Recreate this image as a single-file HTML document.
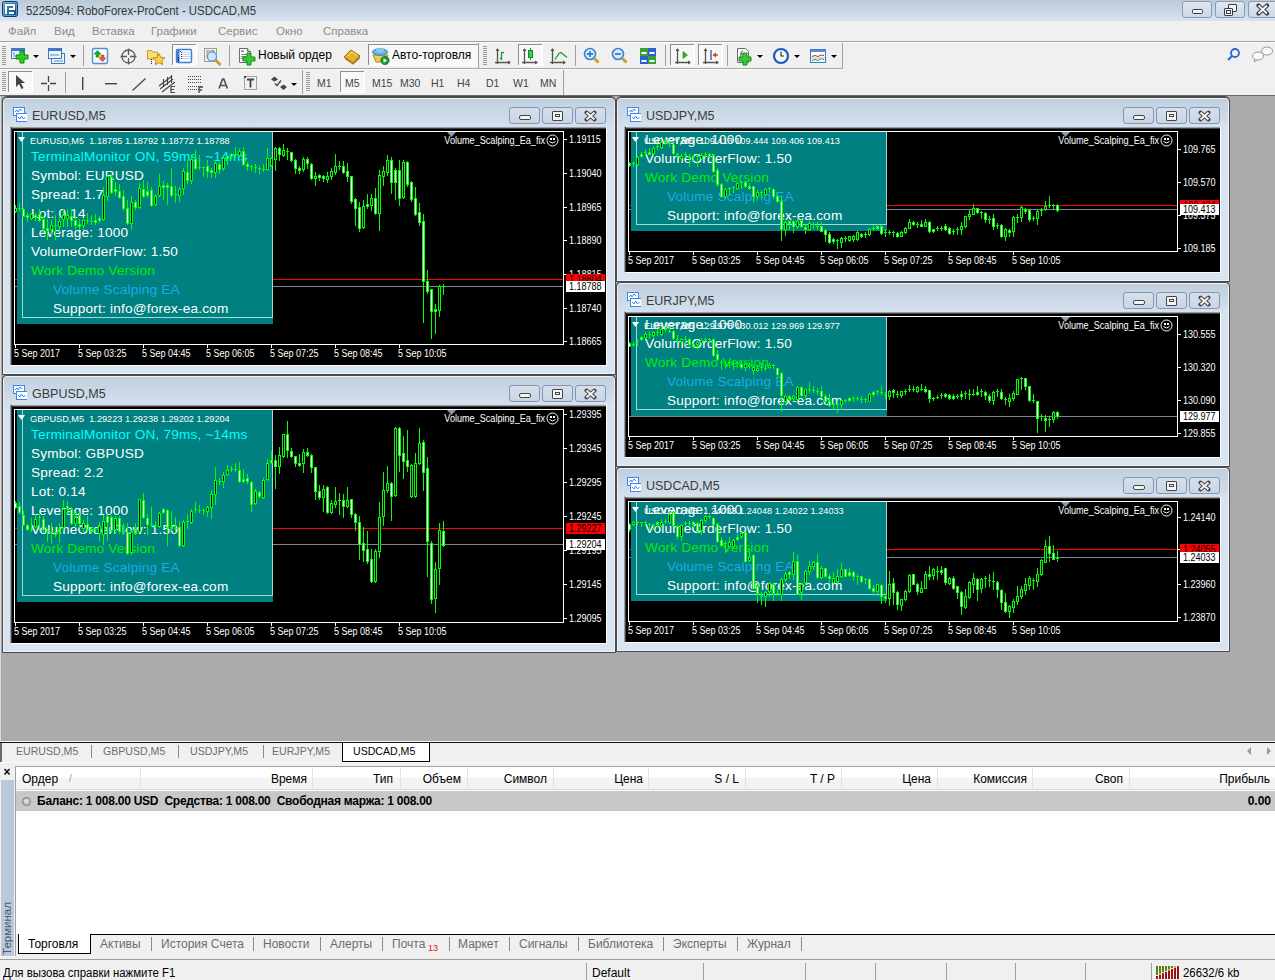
<!DOCTYPE html><html><head><meta charset="utf-8"><style>
*{margin:0;padding:0;box-sizing:border-box}
html,body{width:1275px;height:980px;overflow:hidden;background:#f0f0f0;font-family:"Liberation Sans",sans-serif;position:relative}
.a{position:absolute}
.t{position:absolute;white-space:nowrap;line-height:1}
</style></head><body><div class="a" style="left:0;top:0;width:1275px;height:21px;background:linear-gradient(#bccad8,#c8d6e4 50%,#d7e4f3)"></div><svg class="a" style="left:0;top:0" width="20" height="20"><defs><linearGradient id="lg" x1="0" y1="0" x2="1" y2="1"><stop offset="0" stop-color="#5aa6d8"/><stop offset="1" stop-color="#0a3f7a"/></linearGradient></defs><rect x="2.5" y="1.5" width="15" height="15" rx="2" fill="url(#lg)" stroke="#0b3c72"/><rect x="3.5" y="2.5" width="13" height="13" rx="1" fill="none" stroke="#8cc6ea" stroke-opacity=".6"/><rect x="5" y="4" width="2" height="10" fill="#fff"/><rect x="5" y="4" width="10" height="2" fill="#fff"/><rect x="13" y="4" width="2" height="6" fill="#fff"/><rect x="9" y="8" width="6" height="2" fill="#fff"/><rect x="9" y="12" width="5" height="2" fill="#fff"/></svg><div class="t" style="left:26px;top:5px;font-size:12px;color:#353535;transform:scaleX(0.95);transform-origin:0 0">5225094: RoboForex-ProCent - USDCAD,M5</div><div class="a" style="left:1182px;top:1px;width:30px;height:17px;border:1px solid #8a9ab5;border-radius:3px;background:linear-gradient(#dfe7f1,#cbd8e7)"></div><div class="a" style="left:1215px;top:1px;width:30px;height:17px;border:1px solid #8a9ab5;border-radius:3px;background:linear-gradient(#dfe7f1,#cbd8e7)"></div><div class="a" style="left:1248px;top:1px;width:30px;height:17px;border:1px solid #8a9ab5;border-radius:3px;background:linear-gradient(#dfe7f1,#cbd8e7)"></div><div class="a" style="left:1192px;top:9px;width:11px;height:5px;background:#f4f4f4;border:1px solid #3a3a48;border-radius:1.5px"></div><div class="a" style="left:1228px;top:4px;width:9px;height:8px;background:#f4f4f4;border:1px solid #3a3a48;border-radius:1px"></div><div class="a" style="left:1224px;top:8px;width:9px;height:8px;background:#f4f4f4;border:1px solid #3a3a48;border-radius:1px"></div><div class="a" style="left:1226px;top:10px;width:5px;height:4px;border:1px solid #3a3a48"></div><svg class="a" style="left:1256px;top:3px" width="14" height="13"><path d="M2.5 2.5L11 10.5M11 2.5L2.5 10.5" stroke="#3a3a48" stroke-width="4.2" stroke-linecap="round"/><path d="M2.5 2.5L11 10.5M11 2.5L2.5 10.5" stroke="#f4f4f4" stroke-width="2"/></svg><div class="t" style="left:8px;top:25.5px;font-size:11.5px;color:#8c8c8c">Файл</div><div class="t" style="left:54px;top:25.5px;font-size:11.5px;color:#8c8c8c">Вид</div><div class="t" style="left:92px;top:25.5px;font-size:11.5px;color:#8c8c8c">Вставка</div><div class="t" style="left:151px;top:25.5px;font-size:11.5px;color:#8c8c8c">Графики</div><div class="t" style="left:218px;top:25.5px;font-size:11.5px;color:#8c8c8c">Сервис</div><div class="t" style="left:276px;top:25.5px;font-size:11.5px;color:#8c8c8c">Окно</div><div class="t" style="left:323px;top:25.5px;font-size:11.5px;color:#8c8c8c">Справка</div><div class="a" style="left:0;top:41px;width:1275px;height:1px;background:#a0a0a0"></div><div class="a" style="left:0;top:42px;width:1275px;height:1px;background:#fdfdfd"></div><div class="a" style="left:0;top:68px;width:843px;height:1px;background:#a8a8a8"></div><div class="a" style="left:0;top:69px;width:843px;height:1px;background:#fbfbfb"></div><div class="a" style="left:0;top:95px;width:1275px;height:1px;background:#6a6a6a"></div><div class="a" style="left:0;top:96px;width:1275px;height:645px;background:#ababab"></div><div class="a" style="left:0;top:741px;width:1275px;height:1px;background:#f8f8f8"></div><div class="a" style="left:0;top:96px;width:1px;height:645px;background:#d9d9d9"></div><div class="a" style="left:1px;top:96px;width:1px;height:645px;background:#a8a8a8"></div><div class="a" style="left:2px;top:96px;width:614px;height:279px;border:1px solid #4a4a4a;border-radius:5px 5px 0 0;box-shadow:inset 0 1px #4a4a4a,inset 0 2px #eef3f9,inset 1px 0 #eef3f9,inset -1px -1px #eef3f9;background:linear-gradient(#c0cedc 0px,#c6d4e3 10px,#cfdbe9 22px,#d6e2ef 31px,#d8e4f0 100%)"></div><svg class="a" style="left:11px;top:107px" width="16" height="16" shape-rendering="crispEdges"><rect x="2.5" y="0.5" width="11" height="8" fill="#fff" stroke="#3d86f0"/><rect x="5.5" y="6.5" width="11" height="8" fill="#fff" stroke="#3d86f0"/><path d="M4 5l2-2 1 2 2-3 2 2" fill="none" stroke="#3d86f0" shape-rendering="auto"/><path d="M7 10l2 2 1.5-3 2 3 2-2" fill="none" stroke="#3d86f0" shape-rendering="auto"/></svg><div class="t" style="left:32px;top:110px;font-size:12.5px;color:#3b3b3b">EURUSD,M5</div><div class="a" style="left:509px;top:107px;width:31px;height:17px;border:1px solid #8595b3;border-radius:3px;background:linear-gradient(#d6e0ec,#c8d5e5)"></div><div class="a" style="left:542px;top:107px;width:31px;height:17px;border:1px solid #8595b3;border-radius:3px;background:linear-gradient(#d6e0ec,#c8d5e5)"></div><div class="a" style="left:575px;top:107px;width:31px;height:17px;border:1px solid #8595b3;border-radius:3px;background:linear-gradient(#d6e0ec,#c8d5e5)"></div><div class="a" style="left:519px;top:115px;width:12px;height:5px;background:#f4f4f4;border:1px solid #444;border-radius:2px"></div><div class="a" style="left:552px;top:111px;width:11px;height:10px;background:#f4f4f4;border:1px solid #444;border-radius:1px"></div><div class="a" style="left:555px;top:114px;width:5px;height:3px;border:1px solid #444"></div><svg class="a" style="left:584px;top:110px" width="13" height="12"><path d="M2.5 2.5L10.5 9.5M10.5 2.5L2.5 9.5" stroke="#444" stroke-width="4" stroke-linecap="round"/><path d="M2.5 2.5L10.5 9.5M10.5 2.5L2.5 9.5" stroke="#f4f4f4" stroke-width="2"/></svg><div class="a" style="left:10px;top:126px;width:597px;height:240px;border-top:1px solid #d3dfec;border-left:1px solid #9c9c9c;border-right:1px solid #fff;border-bottom:1px solid #fff;background:#000;background-clip:padding-box;overflow:hidden"><svg class="a" style="left:0;top:0" width="595" height="238" shape-rendering="crispEdges"><rect x="3" y="152" width="549" height="1" fill="#ff0000"/><rect x="3" y="159" width="549" height="1" fill="#778899"/><rect x="6" y="5" width="256" height="192" fill="#008080"/><rect x="11.5" y="4.5" width="250" height="186" fill="none" stroke="#a6d6d6" stroke-width="1"/></svg><svg class="a" style="left:7px;top:10px" width="8" height="6"><path d="M0 0h7l-3.5 5z" fill="#fff"/></svg><div class="t" style="left:19px;top:9.3px;font-size:9.4px;color:#fff;transform:scaleX(0.98);transform-origin:0 0">EURUSD,M5&nbsp; 1.18785 1.18792 1.18772 1.18788</div><div class="t" style="left:20px;top:23px;font-size:13.6px;letter-spacing:0.2px;color:#00ffff">TerminalMonitor ON, 59ms, ~14ms</div><div class="t" style="left:20px;top:42px;font-size:13.6px;letter-spacing:0.2px;color:#fff">Symbol: EURUSD</div><div class="t" style="left:20px;top:61px;font-size:13.6px;letter-spacing:0.2px;color:#fff">Spread: 1.7</div><div class="t" style="left:20px;top:80px;font-size:13.6px;letter-spacing:0.2px;color:#fff">Lot: 0.14</div><div class="t" style="left:20px;top:99px;font-size:13.6px;letter-spacing:0.2px;color:#fff">Leverage: 1000</div><div class="t" style="left:20px;top:118px;font-size:13.6px;letter-spacing:0.2px;color:#fff">VolumeOrderFlow: 1.50</div><div class="t" style="left:20px;top:137px;font-size:13.6px;letter-spacing:0.2px;color:#00f000">Work Demo Version</div><div class="t" style="left:42px;top:156px;font-size:13.6px;letter-spacing:0.2px;color:#1eaae6">Volume Scalping EA</div><div class="t" style="left:42px;top:175px;font-size:13.6px;letter-spacing:0.2px;color:#fff">Support: info@forex-ea.com</div><svg class="a" style="left:0;top:0" width="595" height="238" shape-rendering="crispEdges"><rect x="4" y="78" width="1" height="8" fill="#00ff00"/><rect x="3.5" y="81.5" width="2" height="3" fill="#000" stroke="#00ff00"/><rect x="8" y="76" width="1" height="8" fill="#00ff00"/><rect x="7" y="81" width="3" height="1" fill="#00ff00"/><rect x="12" y="81" width="1" height="9" fill="#00ff00"/><rect x="11.5" y="82.5" width="2" height="7" fill="#fff" stroke="#00ff00"/><rect x="16" y="86" width="1" height="9" fill="#00ff00"/><rect x="15.5" y="88.5" width="2" height="2" fill="#fff" stroke="#00ff00"/><rect x="20" y="86" width="1" height="7" fill="#00ff00"/><rect x="19.5" y="87.5" width="2" height="4" fill="#000" stroke="#00ff00"/><rect x="24" y="86" width="1" height="8" fill="#00ff00"/><rect x="23.5" y="88.5" width="2" height="2" fill="#fff" stroke="#00ff00"/><rect x="28" y="82" width="1" height="13" fill="#00ff00"/><rect x="27.5" y="87.5" width="2" height="6" fill="#fff" stroke="#00ff00"/><rect x="32" y="89" width="1" height="17" fill="#00ff00"/><rect x="31.5" y="92.5" width="2" height="9" fill="#fff" stroke="#00ff00"/><rect x="36" y="92" width="1" height="21" fill="#00ff00"/><rect x="35.5" y="101.5" width="2" height="2" fill="#fff" stroke="#00ff00"/><rect x="40" y="93" width="1" height="15" fill="#00ff00"/><rect x="39.5" y="98.5" width="2" height="4" fill="#000" stroke="#00ff00"/><rect x="44" y="88" width="1" height="25" fill="#00ff00"/><rect x="43" y="98" width="3" height="1" fill="#00ff00"/><rect x="48" y="90" width="1" height="15" fill="#00ff00"/><rect x="47.5" y="94.5" width="2" height="5" fill="#000" stroke="#00ff00"/><rect x="52" y="82" width="1" height="18" fill="#00ff00"/><rect x="51.5" y="88.5" width="2" height="4" fill="#000" stroke="#00ff00"/><rect x="56" y="82" width="1" height="18" fill="#00ff00"/><rect x="55.5" y="88.5" width="2" height="3" fill="#000" stroke="#00ff00"/><rect x="60" y="82" width="1" height="18" fill="#00ff00"/><rect x="59.5" y="89.5" width="2" height="4" fill="#fff" stroke="#00ff00"/><rect x="64" y="90" width="1" height="12" fill="#00ff00"/><rect x="63.5" y="93.5" width="2" height="5" fill="#fff" stroke="#00ff00"/><rect x="68" y="92" width="1" height="11" fill="#00ff00"/><rect x="67.5" y="97.5" width="2" height="2" fill="#fff" stroke="#00ff00"/><rect x="72" y="92" width="1" height="11" fill="#00ff00"/><rect x="71.5" y="93.5" width="2" height="5" fill="#000" stroke="#00ff00"/><rect x="76" y="86" width="1" height="11" fill="#00ff00"/><rect x="75" y="93" width="3" height="1" fill="#00ff00"/><rect x="80" y="88" width="1" height="10" fill="#00ff00"/><rect x="79" y="94" width="3" height="1" fill="#00ff00"/><rect x="84" y="87" width="1" height="11" fill="#00ff00"/><rect x="83.5" y="93.5" width="2" height="2" fill="#fff" stroke="#00ff00"/><rect x="88" y="89" width="1" height="7" fill="#00ff00"/><rect x="87.5" y="91.5" width="2" height="2" fill="#fff" stroke="#00ff00"/><rect x="92" y="60" width="1" height="34" fill="#00ff00"/><rect x="91.5" y="68.5" width="2" height="24" fill="#000" stroke="#00ff00"/><rect x="96" y="47" width="1" height="27" fill="#00ff00"/><rect x="95.5" y="49.5" width="2" height="20" fill="#000" stroke="#00ff00"/><rect x="100" y="47" width="1" height="20" fill="#00ff00"/><rect x="99.5" y="50.5" width="2" height="15" fill="#fff" stroke="#00ff00"/><rect x="104" y="55" width="1" height="14" fill="#00ff00"/><rect x="103.5" y="62.5" width="2" height="2" fill="#fff" stroke="#00ff00"/><rect x="108" y="57" width="1" height="15" fill="#00ff00"/><rect x="107.5" y="64.5" width="2" height="6" fill="#fff" stroke="#00ff00"/><rect x="112" y="63" width="1" height="21" fill="#00ff00"/><rect x="111.5" y="69.5" width="2" height="12" fill="#fff" stroke="#00ff00"/><rect x="116" y="73" width="1" height="25" fill="#00ff00"/><rect x="115.5" y="81.5" width="2" height="15" fill="#fff" stroke="#00ff00"/><rect x="120" y="69" width="1" height="34" fill="#00ff00"/><rect x="119.5" y="75.5" width="2" height="21" fill="#000" stroke="#00ff00"/><rect x="124" y="73" width="1" height="10" fill="#00ff00"/><rect x="123.5" y="75.5" width="2" height="5" fill="#fff" stroke="#00ff00"/><rect x="128" y="56" width="1" height="26" fill="#00ff00"/><rect x="127.5" y="61.5" width="2" height="19" fill="#000" stroke="#00ff00"/><rect x="132" y="53" width="1" height="18" fill="#00ff00"/><rect x="131.5" y="62.5" width="2" height="7" fill="#fff" stroke="#00ff00"/><rect x="136" y="55" width="1" height="16" fill="#00ff00"/><rect x="135.5" y="64.5" width="2" height="4" fill="#fff" stroke="#00ff00"/><rect x="140" y="60" width="1" height="20" fill="#00ff00"/><rect x="139.5" y="63.5" width="2" height="15" fill="#fff" stroke="#00ff00"/><rect x="144" y="67" width="1" height="12" fill="#00ff00"/><rect x="143.5" y="69.5" width="2" height="8" fill="#000" stroke="#00ff00"/><rect x="148" y="47" width="1" height="23" fill="#00ff00"/><rect x="147.5" y="59.5" width="2" height="9" fill="#000" stroke="#00ff00"/><rect x="152" y="54" width="1" height="19" fill="#00ff00"/><rect x="151.5" y="58.5" width="2" height="2" fill="#fff" stroke="#00ff00"/><rect x="156" y="56" width="1" height="22" fill="#00ff00"/><rect x="155.5" y="58.5" width="2" height="2" fill="#fff" stroke="#00ff00"/><rect x="160" y="41" width="1" height="29" fill="#00ff00"/><rect x="159.5" y="59.5" width="2" height="9" fill="#fff" stroke="#00ff00"/><rect x="164" y="59" width="1" height="17" fill="#00ff00"/><rect x="163" y="67" width="3" height="1" fill="#00ff00"/><rect x="168" y="60" width="1" height="15" fill="#00ff00"/><rect x="167.5" y="62.5" width="2" height="6" fill="#000" stroke="#00ff00"/><rect x="172" y="41" width="1" height="27" fill="#00ff00"/><rect x="171.5" y="44.5" width="2" height="17" fill="#000" stroke="#00ff00"/><rect x="176" y="34" width="1" height="23" fill="#00ff00"/><rect x="175.5" y="45.5" width="2" height="8" fill="#fff" stroke="#00ff00"/><rect x="180" y="30" width="1" height="27" fill="#00ff00"/><rect x="179.5" y="32.5" width="2" height="21" fill="#000" stroke="#00ff00"/><rect x="184" y="23" width="1" height="20" fill="#00ff00"/><rect x="183.5" y="32.5" width="2" height="9" fill="#fff" stroke="#00ff00"/><rect x="188" y="28" width="1" height="15" fill="#00ff00"/><rect x="187" y="40" width="3" height="1" fill="#00ff00"/><rect x="192" y="39" width="1" height="11" fill="#00ff00"/><rect x="191" y="40" width="3" height="1" fill="#00ff00"/><rect x="196" y="33" width="1" height="18" fill="#00ff00"/><rect x="195.5" y="39.5" width="2" height="5" fill="#fff" stroke="#00ff00"/><rect x="200" y="41" width="1" height="10" fill="#00ff00"/><rect x="199.5" y="43.5" width="2" height="2" fill="#fff" stroke="#00ff00"/><rect x="204" y="33" width="1" height="18" fill="#00ff00"/><rect x="203.5" y="36.5" width="2" height="9" fill="#000" stroke="#00ff00"/><rect x="208" y="35" width="1" height="12" fill="#00ff00"/><rect x="207.5" y="37.5" width="2" height="5" fill="#fff" stroke="#00ff00"/><rect x="212" y="29" width="1" height="15" fill="#00ff00"/><rect x="211.5" y="31.5" width="2" height="10" fill="#000" stroke="#00ff00"/><rect x="216" y="28" width="1" height="10" fill="#00ff00"/><rect x="215.5" y="29.5" width="2" height="2" fill="#fff" stroke="#00ff00"/><rect x="220" y="26" width="1" height="6" fill="#00ff00"/><rect x="219.5" y="27.5" width="2" height="2" fill="#fff" stroke="#00ff00"/><rect x="224" y="20" width="1" height="11" fill="#00ff00"/><rect x="223" y="27" width="3" height="1" fill="#00ff00"/><rect x="228" y="21" width="1" height="9" fill="#00ff00"/><rect x="227.5" y="24.5" width="2" height="4" fill="#000" stroke="#00ff00"/><rect x="232" y="20" width="1" height="19" fill="#00ff00"/><rect x="231.5" y="24.5" width="2" height="13" fill="#fff" stroke="#00ff00"/><rect x="236" y="35" width="1" height="9" fill="#00ff00"/><rect x="235.5" y="37.5" width="2" height="2" fill="#fff" stroke="#00ff00"/><rect x="240" y="38" width="1" height="6" fill="#00ff00"/><rect x="239" y="39" width="3" height="1" fill="#00ff00"/><rect x="244" y="37" width="1" height="9" fill="#00ff00"/><rect x="243" y="40" width="3" height="1" fill="#00ff00"/><rect x="248" y="39" width="1" height="8" fill="#00ff00"/><rect x="247" y="41" width="3" height="1" fill="#00ff00"/><rect x="252" y="37" width="1" height="8" fill="#00ff00"/><rect x="251" y="42" width="3" height="1" fill="#00ff00"/><rect x="256" y="21" width="1" height="23" fill="#00ff00"/><rect x="255.5" y="31.5" width="2" height="11" fill="#000" stroke="#00ff00"/><rect x="260" y="30" width="1" height="10" fill="#00ff00"/><rect x="259.5" y="31.5" width="2" height="7" fill="#000" stroke="#00ff00"/><rect x="264" y="20" width="1" height="24" fill="#00ff00"/><rect x="263.5" y="21.5" width="2" height="11" fill="#000" stroke="#00ff00"/><rect x="268" y="20" width="1" height="14" fill="#00ff00"/><rect x="267.5" y="21.5" width="2" height="6" fill="#fff" stroke="#00ff00"/><rect x="272" y="17" width="1" height="13" fill="#00ff00"/><rect x="271.5" y="23.5" width="2" height="5" fill="#000" stroke="#00ff00"/><rect x="276" y="21" width="1" height="12" fill="#00ff00"/><rect x="275" y="24" width="3" height="1" fill="#00ff00"/><rect x="280" y="25" width="1" height="10" fill="#00ff00"/><rect x="279.5" y="25.5" width="2" height="8" fill="#fff" stroke="#00ff00"/><rect x="284" y="32" width="1" height="15" fill="#00ff00"/><rect x="283.5" y="33.5" width="2" height="8" fill="#fff" stroke="#00ff00"/><rect x="288" y="39" width="1" height="8" fill="#00ff00"/><rect x="287.5" y="41.5" width="2" height="2" fill="#fff" stroke="#00ff00"/><rect x="292" y="30" width="1" height="15" fill="#00ff00"/><rect x="291.5" y="32.5" width="2" height="10" fill="#000" stroke="#00ff00"/><rect x="296" y="30" width="1" height="12" fill="#00ff00"/><rect x="295.5" y="32.5" width="2" height="4" fill="#fff" stroke="#00ff00"/><rect x="300" y="36" width="1" height="17" fill="#00ff00"/><rect x="299.5" y="37.5" width="2" height="14" fill="#fff" stroke="#00ff00"/><rect x="304" y="45" width="1" height="14" fill="#00ff00"/><rect x="303.5" y="49.5" width="2" height="2" fill="#000" stroke="#00ff00"/><rect x="308" y="47" width="1" height="7" fill="#00ff00"/><rect x="307.5" y="48.5" width="2" height="2" fill="#fff" stroke="#00ff00"/><rect x="312" y="48" width="1" height="7" fill="#00ff00"/><rect x="311.5" y="49.5" width="2" height="2" fill="#fff" stroke="#00ff00"/><rect x="316" y="45" width="1" height="11" fill="#00ff00"/><rect x="315.5" y="49.5" width="2" height="3" fill="#000" stroke="#00ff00"/><rect x="320" y="41" width="1" height="12" fill="#00ff00"/><rect x="319.5" y="44.5" width="2" height="5" fill="#000" stroke="#00ff00"/><rect x="324" y="27" width="1" height="21" fill="#00ff00"/><rect x="323.5" y="39.5" width="2" height="6" fill="#000" stroke="#00ff00"/><rect x="328" y="34" width="1" height="9" fill="#00ff00"/><rect x="327" y="39" width="3" height="1" fill="#00ff00"/><rect x="332" y="34" width="1" height="13" fill="#00ff00"/><rect x="331.5" y="39.5" width="2" height="6" fill="#fff" stroke="#00ff00"/><rect x="336" y="36" width="1" height="19" fill="#00ff00"/><rect x="335.5" y="44.5" width="2" height="5" fill="#fff" stroke="#00ff00"/><rect x="340" y="49" width="1" height="28" fill="#00ff00"/><rect x="339.5" y="49.5" width="2" height="25" fill="#fff" stroke="#00ff00"/><rect x="344" y="71" width="1" height="28" fill="#00ff00"/><rect x="343.5" y="72.5" width="2" height="9" fill="#fff" stroke="#00ff00"/><rect x="348" y="75" width="1" height="30" fill="#00ff00"/><rect x="347.5" y="80.5" width="2" height="21" fill="#fff" stroke="#00ff00"/><rect x="352" y="73" width="1" height="29" fill="#00ff00"/><rect x="351.5" y="79.5" width="2" height="21" fill="#000" stroke="#00ff00"/><rect x="356" y="67" width="1" height="15" fill="#00ff00"/><rect x="355.5" y="77.5" width="2" height="2" fill="#fff" stroke="#00ff00"/><rect x="360" y="67" width="1" height="17" fill="#00ff00"/><rect x="359.5" y="71.5" width="2" height="7" fill="#000" stroke="#00ff00"/><rect x="364" y="61" width="1" height="27" fill="#00ff00"/><rect x="363.5" y="71.5" width="2" height="15" fill="#fff" stroke="#00ff00"/><rect x="368" y="43" width="1" height="61" fill="#00ff00"/><rect x="367.5" y="48.5" width="2" height="38" fill="#000" stroke="#00ff00"/><rect x="372" y="39" width="1" height="20" fill="#00ff00"/><rect x="371.5" y="44.5" width="2" height="5" fill="#000" stroke="#00ff00"/><rect x="376" y="28" width="1" height="21" fill="#00ff00"/><rect x="375.5" y="33.5" width="2" height="12" fill="#000" stroke="#00ff00"/><rect x="380" y="30" width="1" height="37" fill="#00ff00"/><rect x="379.5" y="33.5" width="2" height="22" fill="#fff" stroke="#00ff00"/><rect x="384" y="41" width="1" height="32" fill="#00ff00"/><rect x="383.5" y="43.5" width="2" height="12" fill="#fff" stroke="#00ff00"/><rect x="388" y="33" width="1" height="46" fill="#00ff00"/><rect x="387.5" y="43.5" width="2" height="28" fill="#fff" stroke="#00ff00"/><rect x="392" y="33" width="1" height="39" fill="#00ff00"/><rect x="391.5" y="35.5" width="2" height="35" fill="#000" stroke="#00ff00"/><rect x="396" y="34" width="1" height="26" fill="#00ff00"/><rect x="395.5" y="35.5" width="2" height="22" fill="#fff" stroke="#00ff00"/><rect x="400" y="54" width="1" height="21" fill="#00ff00"/><rect x="399.5" y="55.5" width="2" height="17" fill="#fff" stroke="#00ff00"/><rect x="404" y="60" width="1" height="29" fill="#00ff00"/><rect x="403.5" y="71.5" width="2" height="16" fill="#fff" stroke="#00ff00"/><rect x="408" y="76" width="1" height="23" fill="#00ff00"/><rect x="407.5" y="85.5" width="2" height="10" fill="#fff" stroke="#00ff00"/><rect x="412" y="87" width="1" height="109" fill="#00ff00"/><rect x="411.5" y="94.5" width="2" height="60" fill="#fff" stroke="#00ff00"/><rect x="416" y="143" width="1" height="24" fill="#00ff00"/><rect x="415.5" y="154.5" width="2" height="10" fill="#fff" stroke="#00ff00"/><rect x="420" y="162" width="1" height="50" fill="#00ff00"/><rect x="419.5" y="162.5" width="2" height="22" fill="#fff" stroke="#00ff00"/><rect x="424" y="177" width="1" height="30" fill="#00ff00"/><rect x="423.5" y="182.5" width="2" height="2" fill="#fff" stroke="#00ff00"/><rect x="428" y="158" width="1" height="32" fill="#00ff00"/><rect x="427.5" y="159.5" width="2" height="24" fill="#000" stroke="#00ff00"/><rect x="432" y="157" width="1" height="11" fill="#00ff00"/><rect x="431" y="159" width="3" height="1" fill="#00ff00"/><rect x="3.5" y="4.5" width="549" height="213" fill="none" stroke="#fff"/><path d="M436.0 5h9l-4.5 5z" fill="#8c9aab" shape-rendering="auto"/><rect x="553" y="12" width="3" height="1" fill="#fff"/><rect x="553" y="46" width="3" height="1" fill="#fff"/><rect x="553" y="80" width="3" height="1" fill="#fff"/><rect x="553" y="113" width="3" height="1" fill="#fff"/><rect x="553" y="147" width="3" height="1" fill="#fff"/><rect x="553" y="181" width="3" height="1" fill="#fff"/><rect x="553" y="214" width="3" height="1" fill="#fff"/><rect x="4" y="218" width="1" height="3" fill="#fff"/><rect x="68" y="218" width="1" height="3" fill="#fff"/><rect x="132" y="218" width="1" height="3" fill="#fff"/><rect x="196" y="218" width="1" height="3" fill="#fff"/><rect x="260" y="218" width="1" height="3" fill="#fff"/><rect x="324" y="218" width="1" height="3" fill="#fff"/><rect x="388" y="218" width="1" height="3" fill="#fff"/></svg><div class="t" style="left:558px;top:7.5px;font-size:10px;color:#fff;transform:scaleX(0.9);transform-origin:0 0">1.19115</div><div class="t" style="left:558px;top:41.5px;font-size:10px;color:#fff;transform:scaleX(0.9);transform-origin:0 0">1.19040</div><div class="t" style="left:558px;top:75.5px;font-size:10px;color:#fff;transform:scaleX(0.9);transform-origin:0 0">1.18965</div><div class="t" style="left:558px;top:108.5px;font-size:10px;color:#fff;transform:scaleX(0.9);transform-origin:0 0">1.18890</div><div class="t" style="left:558px;top:142.5px;font-size:10px;color:#fff;transform:scaleX(0.9);transform-origin:0 0">1.18815</div><div class="t" style="left:558px;top:176.5px;font-size:10px;color:#fff;transform:scaleX(0.9);transform-origin:0 0">1.18740</div><div class="t" style="left:558px;top:209.5px;font-size:10px;color:#fff;transform:scaleX(0.9);transform-origin:0 0">1.18665</div><div class="a" style="left:555px;top:147px;width:39px;height:11px;background:#ff0000"></div><div class="t" style="left:558px;top:147.5px;font-size:10px;color:#000;transform:scaleX(0.9);transform-origin:0 0">1.18804</div><div class="a" style="left:555px;top:154px;width:39px;height:11px;background:#fff"></div><div class="t" style="left:558px;top:154.5px;font-size:10px;color:#000;transform:scaleX(0.9);transform-origin:0 0">1.18788</div><div class="t" style="left:3px;top:221.5px;font-size:10px;color:#fff;transform:scaleX(0.9);transform-origin:0 0">5 Sep 2017</div><div class="t" style="left:67px;top:221.5px;font-size:10px;color:#fff;transform:scaleX(0.9);transform-origin:0 0">5 Sep 03:25</div><div class="t" style="left:131px;top:221.5px;font-size:10px;color:#fff;transform:scaleX(0.9);transform-origin:0 0">5 Sep 04:45</div><div class="t" style="left:195px;top:221.5px;font-size:10px;color:#fff;transform:scaleX(0.9);transform-origin:0 0">5 Sep 06:05</div><div class="t" style="left:259px;top:221.5px;font-size:10px;color:#fff;transform:scaleX(0.9);transform-origin:0 0">5 Sep 07:25</div><div class="t" style="left:323px;top:221.5px;font-size:10px;color:#fff;transform:scaleX(0.9);transform-origin:0 0">5 Sep 08:45</div><div class="t" style="left:387px;top:221.5px;font-size:10px;color:#fff;transform:scaleX(0.9);transform-origin:0 0">5 Sep 10:05</div><div class="t" style="left:534px;top:9px;font-size:10px;color:#fff;transform:translateX(-100%) scaleX(0.91);transform-origin:100% 0">Volume_Scalping_Ea_fix</div><svg class="a" style="left:535px;top:7px" width="13" height="13"><circle cx="6.5" cy="6.5" r="5.5" fill="none" stroke="#fff"/><rect x="4" y="4" width="2" height="2" fill="#fff"/><rect x="7" y="4" width="2" height="2" fill="#fff"/><path d="M3.5 7.5q3 3 6 0" fill="none" stroke="#fff"/></svg></div><div class="a" style="left:10px;top:127px;width:596px;height:1px;background:#9c9c9c"></div><div class="a" style="left:11px;top:128px;width:595px;height:1px;background:#404040"></div><div class="a" style="left:11px;top:127px;width:1px;height:238px;background:#404040"></div><div class="a" style="left:2px;top:374px;width:614px;height:279px;border:1px solid #4a4a4a;border-radius:5px 5px 0 0;box-shadow:inset 0 1px #4a4a4a,inset 0 2px #eef3f9,inset 1px 0 #eef3f9,inset -1px -1px #eef3f9;background:linear-gradient(#c0cedc 0px,#c6d4e3 10px,#cfdbe9 22px,#d6e2ef 31px,#d8e4f0 100%)"></div><svg class="a" style="left:11px;top:385px" width="16" height="16" shape-rendering="crispEdges"><rect x="2.5" y="0.5" width="11" height="8" fill="#fff" stroke="#3d86f0"/><rect x="5.5" y="6.5" width="11" height="8" fill="#fff" stroke="#3d86f0"/><path d="M4 5l2-2 1 2 2-3 2 2" fill="none" stroke="#3d86f0" shape-rendering="auto"/><path d="M7 10l2 2 1.5-3 2 3 2-2" fill="none" stroke="#3d86f0" shape-rendering="auto"/></svg><div class="t" style="left:32px;top:388px;font-size:12.5px;color:#3b3b3b">GBPUSD,M5</div><div class="a" style="left:509px;top:385px;width:31px;height:17px;border:1px solid #8595b3;border-radius:3px;background:linear-gradient(#d6e0ec,#c8d5e5)"></div><div class="a" style="left:542px;top:385px;width:31px;height:17px;border:1px solid #8595b3;border-radius:3px;background:linear-gradient(#d6e0ec,#c8d5e5)"></div><div class="a" style="left:575px;top:385px;width:31px;height:17px;border:1px solid #8595b3;border-radius:3px;background:linear-gradient(#d6e0ec,#c8d5e5)"></div><div class="a" style="left:519px;top:393px;width:12px;height:5px;background:#f4f4f4;border:1px solid #444;border-radius:2px"></div><div class="a" style="left:552px;top:389px;width:11px;height:10px;background:#f4f4f4;border:1px solid #444;border-radius:1px"></div><div class="a" style="left:555px;top:392px;width:5px;height:3px;border:1px solid #444"></div><svg class="a" style="left:584px;top:388px" width="13" height="12"><path d="M2.5 2.5L10.5 9.5M10.5 2.5L2.5 9.5" stroke="#444" stroke-width="4" stroke-linecap="round"/><path d="M2.5 2.5L10.5 9.5M10.5 2.5L2.5 9.5" stroke="#f4f4f4" stroke-width="2"/></svg><div class="a" style="left:10px;top:404px;width:597px;height:240px;border-top:1px solid #d3dfec;border-left:1px solid #9c9c9c;border-right:1px solid #fff;border-bottom:1px solid #fff;background:#000;background-clip:padding-box;overflow:hidden"><svg class="a" style="left:0;top:0" width="595" height="238" shape-rendering="crispEdges"><rect x="3" y="123" width="549" height="1" fill="#ff0000"/><rect x="3" y="139" width="549" height="1" fill="#778899"/><rect x="6" y="5" width="256" height="192" fill="#008080"/><rect x="11.5" y="4.5" width="250" height="186" fill="none" stroke="#a6d6d6" stroke-width="1"/></svg><svg class="a" style="left:7px;top:10px" width="8" height="6"><path d="M0 0h7l-3.5 5z" fill="#fff"/></svg><div class="t" style="left:19px;top:9.3px;font-size:9.4px;color:#fff;transform:scaleX(0.98);transform-origin:0 0">GBPUSD,M5&nbsp; 1.29223 1.29238 1.29202 1.29204</div><div class="t" style="left:20px;top:23px;font-size:13.6px;letter-spacing:0.2px;color:#00ffff">TerminalMonitor ON, 79ms, ~14ms</div><div class="t" style="left:20px;top:42px;font-size:13.6px;letter-spacing:0.2px;color:#fff">Symbol: GBPUSD</div><div class="t" style="left:20px;top:61px;font-size:13.6px;letter-spacing:0.2px;color:#fff">Spread: 2.2</div><div class="t" style="left:20px;top:80px;font-size:13.6px;letter-spacing:0.2px;color:#fff">Lot: 0.14</div><div class="t" style="left:20px;top:99px;font-size:13.6px;letter-spacing:0.2px;color:#fff">Leverage: 1000</div><div class="t" style="left:20px;top:118px;font-size:13.6px;letter-spacing:0.2px;color:#fff">VolumeOrderFlow: 1.50</div><div class="t" style="left:20px;top:137px;font-size:13.6px;letter-spacing:0.2px;color:#00f000">Work Demo Version</div><div class="t" style="left:42px;top:156px;font-size:13.6px;letter-spacing:0.2px;color:#1eaae6">Volume Scalping EA</div><div class="t" style="left:42px;top:175px;font-size:13.6px;letter-spacing:0.2px;color:#fff">Support: info@forex-ea.com</div><svg class="a" style="left:0;top:0" width="595" height="238" shape-rendering="crispEdges"><rect x="4" y="96" width="1" height="8" fill="#00ff00"/><rect x="3.5" y="98.5" width="2" height="4" fill="#fff" stroke="#00ff00"/><rect x="8" y="97" width="1" height="12" fill="#00ff00"/><rect x="7.5" y="101.5" width="2" height="6" fill="#fff" stroke="#00ff00"/><rect x="12" y="106" width="1" height="15" fill="#00ff00"/><rect x="11.5" y="110.5" width="2" height="9" fill="#fff" stroke="#00ff00"/><rect x="16" y="119" width="1" height="7" fill="#00ff00"/><rect x="15.5" y="120.5" width="2" height="4" fill="#fff" stroke="#00ff00"/><rect x="20" y="113" width="1" height="14" fill="#00ff00"/><rect x="19" y="124" width="3" height="1" fill="#00ff00"/><rect x="24" y="109" width="1" height="14" fill="#00ff00"/><rect x="23.5" y="114.5" width="2" height="7" fill="#000" stroke="#00ff00"/><rect x="28" y="109" width="1" height="17" fill="#00ff00"/><rect x="27" y="112" width="3" height="1" fill="#00ff00"/><rect x="32" y="111" width="1" height="16" fill="#00ff00"/><rect x="31.5" y="114.5" width="2" height="10" fill="#fff" stroke="#00ff00"/><rect x="36" y="124" width="1" height="13" fill="#00ff00"/><rect x="35" y="126" width="3" height="1" fill="#00ff00"/><rect x="40" y="118" width="1" height="21" fill="#00ff00"/><rect x="39" y="127" width="3" height="1" fill="#00ff00"/><rect x="44" y="122" width="1" height="10" fill="#00ff00"/><rect x="43.5" y="127.5" width="2" height="2" fill="#fff" stroke="#00ff00"/><rect x="48" y="118" width="1" height="20" fill="#00ff00"/><rect x="47.5" y="124.5" width="2" height="2" fill="#fff" stroke="#00ff00"/><rect x="52" y="95" width="1" height="31" fill="#00ff00"/><rect x="51.5" y="104.5" width="2" height="18" fill="#000" stroke="#00ff00"/><rect x="56" y="96" width="1" height="14" fill="#00ff00"/><rect x="55.5" y="101.5" width="2" height="2" fill="#fff" stroke="#00ff00"/><rect x="60" y="102" width="1" height="18" fill="#00ff00"/><rect x="59.5" y="104.5" width="2" height="14" fill="#fff" stroke="#00ff00"/><rect x="64" y="108" width="1" height="14" fill="#00ff00"/><rect x="63.5" y="112.5" width="2" height="6" fill="#000" stroke="#00ff00"/><rect x="68" y="107" width="1" height="16" fill="#00ff00"/><rect x="67.5" y="110.5" width="2" height="8" fill="#fff" stroke="#00ff00"/><rect x="72" y="115" width="1" height="12" fill="#00ff00"/><rect x="71.5" y="118.5" width="2" height="5" fill="#000" stroke="#00ff00"/><rect x="76" y="111" width="1" height="15" fill="#00ff00"/><rect x="75.5" y="119.5" width="2" height="5" fill="#fff" stroke="#00ff00"/><rect x="80" y="122" width="1" height="7" fill="#00ff00"/><rect x="79.5" y="124.5" width="2" height="2" fill="#fff" stroke="#00ff00"/><rect x="84" y="123" width="1" height="5" fill="#00ff00"/><rect x="83" y="124" width="3" height="1" fill="#00ff00"/><rect x="88" y="117" width="1" height="19" fill="#00ff00"/><rect x="87.5" y="121.5" width="2" height="7" fill="#000" stroke="#00ff00"/><rect x="92" y="110" width="1" height="30" fill="#00ff00"/><rect x="91.5" y="116.5" width="2" height="13" fill="#000" stroke="#00ff00"/><rect x="96" y="110" width="1" height="26" fill="#00ff00"/><rect x="95.5" y="111.5" width="2" height="6" fill="#fff" stroke="#00ff00"/><rect x="100" y="110" width="1" height="18" fill="#00ff00"/><rect x="99.5" y="112.5" width="2" height="13" fill="#fff" stroke="#00ff00"/><rect x="104" y="111" width="1" height="18" fill="#00ff00"/><rect x="103.5" y="113.5" width="2" height="11" fill="#000" stroke="#00ff00"/><rect x="108" y="111" width="1" height="18" fill="#00ff00"/><rect x="107.5" y="113.5" width="2" height="13" fill="#fff" stroke="#00ff00"/><rect x="112" y="118" width="1" height="12" fill="#00ff00"/><rect x="111" y="126" width="3" height="1" fill="#00ff00"/><rect x="116" y="118" width="1" height="32" fill="#00ff00"/><rect x="115.5" y="127.5" width="2" height="21" fill="#fff" stroke="#00ff00"/><rect x="120" y="125" width="1" height="25" fill="#00ff00"/><rect x="119.5" y="127.5" width="2" height="20" fill="#000" stroke="#00ff00"/><rect x="124" y="118" width="1" height="12" fill="#00ff00"/><rect x="123.5" y="125.5" width="2" height="2" fill="#fff" stroke="#00ff00"/><rect x="128" y="94" width="1" height="34" fill="#00ff00"/><rect x="127.5" y="94.5" width="2" height="32" fill="#000" stroke="#00ff00"/><rect x="132" y="88" width="1" height="26" fill="#00ff00"/><rect x="131.5" y="95.5" width="2" height="17" fill="#fff" stroke="#00ff00"/><rect x="136" y="109" width="1" height="21" fill="#00ff00"/><rect x="135.5" y="113.5" width="2" height="6" fill="#fff" stroke="#00ff00"/><rect x="140" y="102" width="1" height="20" fill="#00ff00"/><rect x="139" y="119" width="3" height="1" fill="#00ff00"/><rect x="144" y="116" width="1" height="7" fill="#00ff00"/><rect x="143" y="120" width="3" height="1" fill="#00ff00"/><rect x="148" y="107" width="1" height="16" fill="#00ff00"/><rect x="147.5" y="108.5" width="2" height="13" fill="#000" stroke="#00ff00"/><rect x="152" y="103" width="1" height="6" fill="#00ff00"/><rect x="151.5" y="104.5" width="2" height="3" fill="#fff" stroke="#00ff00"/><rect x="156" y="104" width="1" height="37" fill="#00ff00"/><rect x="155.5" y="105.5" width="2" height="17" fill="#fff" stroke="#00ff00"/><rect x="160" y="106" width="1" height="20" fill="#00ff00"/><rect x="159" y="122" width="3" height="1" fill="#00ff00"/><rect x="164" y="112" width="1" height="15" fill="#00ff00"/><rect x="163" y="123" width="3" height="1" fill="#00ff00"/><rect x="168" y="116" width="1" height="26" fill="#00ff00"/><rect x="167.5" y="122.5" width="2" height="18" fill="#fff" stroke="#00ff00"/><rect x="172" y="115" width="1" height="27" fill="#00ff00"/><rect x="171.5" y="117.5" width="2" height="23" fill="#000" stroke="#00ff00"/><rect x="176" y="109" width="1" height="15" fill="#00ff00"/><rect x="175" y="116" width="3" height="1" fill="#00ff00"/><rect x="180" y="104" width="1" height="15" fill="#00ff00"/><rect x="179.5" y="106.5" width="2" height="11" fill="#000" stroke="#00ff00"/><rect x="184" y="97" width="1" height="11" fill="#00ff00"/><rect x="183" y="104" width="3" height="1" fill="#00ff00"/><rect x="188" y="100" width="1" height="8" fill="#00ff00"/><rect x="187" y="105" width="3" height="1" fill="#00ff00"/><rect x="192" y="103" width="1" height="7" fill="#00ff00"/><rect x="191" y="105" width="3" height="1" fill="#00ff00"/><rect x="196" y="101" width="1" height="11" fill="#00ff00"/><rect x="195.5" y="102.5" width="2" height="4" fill="#000" stroke="#00ff00"/><rect x="200" y="85" width="1" height="29" fill="#00ff00"/><rect x="199.5" y="89.5" width="2" height="13" fill="#000" stroke="#00ff00"/><rect x="204" y="62" width="1" height="38" fill="#00ff00"/><rect x="203.5" y="75.5" width="2" height="14" fill="#000" stroke="#00ff00"/><rect x="208" y="73" width="1" height="7" fill="#00ff00"/><rect x="207" y="76" width="3" height="1" fill="#00ff00"/><rect x="212" y="67" width="1" height="16" fill="#00ff00"/><rect x="211.5" y="70.5" width="2" height="6" fill="#000" stroke="#00ff00"/><rect x="216" y="60" width="1" height="11" fill="#00ff00"/><rect x="215.5" y="65.5" width="2" height="4" fill="#000" stroke="#00ff00"/><rect x="220" y="61" width="1" height="6" fill="#00ff00"/><rect x="219" y="64" width="3" height="1" fill="#00ff00"/><rect x="224" y="58" width="1" height="9" fill="#00ff00"/><rect x="223" y="64" width="3" height="1" fill="#00ff00"/><rect x="228" y="57" width="1" height="21" fill="#00ff00"/><rect x="227.5" y="65.5" width="2" height="11" fill="#fff" stroke="#00ff00"/><rect x="232" y="64" width="1" height="14" fill="#00ff00"/><rect x="231.5" y="74.5" width="2" height="2" fill="#fff" stroke="#00ff00"/><rect x="236" y="69" width="1" height="10" fill="#00ff00"/><rect x="235.5" y="73.5" width="2" height="3" fill="#fff" stroke="#00ff00"/><rect x="240" y="76" width="1" height="31" fill="#00ff00"/><rect x="239.5" y="77.5" width="2" height="22" fill="#fff" stroke="#00ff00"/><rect x="244" y="84" width="1" height="16" fill="#00ff00"/><rect x="243.5" y="86.5" width="2" height="12" fill="#000" stroke="#00ff00"/><rect x="248" y="86" width="1" height="7" fill="#00ff00"/><rect x="247.5" y="87.5" width="2" height="4" fill="#fff" stroke="#00ff00"/><rect x="252" y="73" width="1" height="21" fill="#00ff00"/><rect x="251.5" y="75.5" width="2" height="17" fill="#000" stroke="#00ff00"/><rect x="256" y="54" width="1" height="22" fill="#00ff00"/><rect x="255.5" y="58.5" width="2" height="16" fill="#000" stroke="#00ff00"/><rect x="260" y="46" width="1" height="13" fill="#00ff00"/><rect x="259.5" y="55.5" width="2" height="2" fill="#fff" stroke="#00ff00"/><rect x="264" y="50" width="1" height="34" fill="#00ff00"/><rect x="263.5" y="55.5" width="2" height="6" fill="#fff" stroke="#00ff00"/><rect x="268" y="42" width="1" height="27" fill="#00ff00"/><rect x="267.5" y="50.5" width="2" height="11" fill="#000" stroke="#00ff00"/><rect x="272" y="29" width="1" height="24" fill="#00ff00"/><rect x="271.5" y="29.5" width="2" height="22" fill="#000" stroke="#00ff00"/><rect x="276" y="16" width="1" height="37" fill="#00ff00"/><rect x="275.5" y="29.5" width="2" height="16" fill="#fff" stroke="#00ff00"/><rect x="280" y="43" width="1" height="10" fill="#00ff00"/><rect x="279.5" y="46.5" width="2" height="5" fill="#fff" stroke="#00ff00"/><rect x="284" y="51" width="1" height="11" fill="#00ff00"/><rect x="283.5" y="51.5" width="2" height="7" fill="#fff" stroke="#00ff00"/><rect x="288" y="49" width="1" height="13" fill="#00ff00"/><rect x="287.5" y="58.5" width="2" height="2" fill="#fff" stroke="#00ff00"/><rect x="292" y="44" width="1" height="24" fill="#00ff00"/><rect x="291.5" y="47.5" width="2" height="11" fill="#000" stroke="#00ff00"/><rect x="296" y="43" width="1" height="9" fill="#00ff00"/><rect x="295.5" y="47.5" width="2" height="3" fill="#fff" stroke="#00ff00"/><rect x="300" y="49" width="1" height="19" fill="#00ff00"/><rect x="299.5" y="50.5" width="2" height="12" fill="#fff" stroke="#00ff00"/><rect x="304" y="62" width="1" height="33" fill="#00ff00"/><rect x="303.5" y="62.5" width="2" height="24" fill="#fff" stroke="#00ff00"/><rect x="308" y="80" width="1" height="15" fill="#00ff00"/><rect x="307.5" y="86.5" width="2" height="6" fill="#fff" stroke="#00ff00"/><rect x="312" y="80" width="1" height="27" fill="#00ff00"/><rect x="311.5" y="84.5" width="2" height="8" fill="#000" stroke="#00ff00"/><rect x="316" y="81" width="1" height="28" fill="#00ff00"/><rect x="315.5" y="82.5" width="2" height="25" fill="#fff" stroke="#00ff00"/><rect x="320" y="95" width="1" height="14" fill="#00ff00"/><rect x="319.5" y="98.5" width="2" height="9" fill="#000" stroke="#00ff00"/><rect x="324" y="82" width="1" height="21" fill="#00ff00"/><rect x="323.5" y="96.5" width="2" height="3" fill="#000" stroke="#00ff00"/><rect x="328" y="88" width="1" height="22" fill="#00ff00"/><rect x="327" y="95" width="3" height="1" fill="#00ff00"/><rect x="332" y="89" width="1" height="24" fill="#00ff00"/><rect x="331.5" y="95.5" width="2" height="6" fill="#fff" stroke="#00ff00"/><rect x="336" y="82" width="1" height="21" fill="#00ff00"/><rect x="335.5" y="95.5" width="2" height="6" fill="#000" stroke="#00ff00"/><rect x="340" y="94" width="1" height="19" fill="#00ff00"/><rect x="339.5" y="94.5" width="2" height="15" fill="#fff" stroke="#00ff00"/><rect x="344" y="108" width="1" height="18" fill="#00ff00"/><rect x="343.5" y="109.5" width="2" height="8" fill="#fff" stroke="#00ff00"/><rect x="348" y="111" width="1" height="44" fill="#00ff00"/><rect x="347.5" y="117.5" width="2" height="22" fill="#fff" stroke="#00ff00"/><rect x="352" y="122" width="1" height="35" fill="#00ff00"/><rect x="351.5" y="138.5" width="2" height="7" fill="#fff" stroke="#00ff00"/><rect x="356" y="126" width="1" height="33" fill="#00ff00"/><rect x="355.5" y="144.5" width="2" height="12" fill="#fff" stroke="#00ff00"/><rect x="360" y="144" width="1" height="34" fill="#00ff00"/><rect x="359.5" y="154.5" width="2" height="22" fill="#fff" stroke="#00ff00"/><rect x="364" y="144" width="1" height="34" fill="#00ff00"/><rect x="363.5" y="146.5" width="2" height="30" fill="#000" stroke="#00ff00"/><rect x="368" y="97" width="1" height="56" fill="#00ff00"/><rect x="367.5" y="112.5" width="2" height="34" fill="#000" stroke="#00ff00"/><rect x="372" y="67" width="1" height="54" fill="#00ff00"/><rect x="371.5" y="85.5" width="2" height="26" fill="#000" stroke="#00ff00"/><rect x="376" y="61" width="1" height="27" fill="#00ff00"/><rect x="375.5" y="78.5" width="2" height="7" fill="#000" stroke="#00ff00"/><rect x="380" y="77" width="1" height="39" fill="#00ff00"/><rect x="379.5" y="78.5" width="2" height="13" fill="#fff" stroke="#00ff00"/><rect x="384" y="22" width="1" height="70" fill="#00ff00"/><rect x="383.5" y="23.5" width="2" height="67" fill="#000" stroke="#00ff00"/><rect x="388" y="22" width="1" height="45" fill="#00ff00"/><rect x="387.5" y="23.5" width="2" height="27" fill="#fff" stroke="#00ff00"/><rect x="392" y="31" width="1" height="43" fill="#00ff00"/><rect x="391.5" y="48.5" width="2" height="8" fill="#fff" stroke="#00ff00"/><rect x="396" y="25" width="1" height="42" fill="#00ff00"/><rect x="395.5" y="55.5" width="2" height="6" fill="#fff" stroke="#00ff00"/><rect x="400" y="59" width="1" height="34" fill="#00ff00"/><rect x="399.5" y="60.5" width="2" height="31" fill="#000" stroke="#00ff00"/><rect x="404" y="48" width="1" height="45" fill="#00ff00"/><rect x="403.5" y="58.5" width="2" height="33" fill="#000" stroke="#00ff00"/><rect x="408" y="23" width="1" height="37" fill="#00ff00"/><rect x="407.5" y="38.5" width="2" height="20" fill="#000" stroke="#00ff00"/><rect x="412" y="35" width="1" height="51" fill="#00ff00"/><rect x="411.5" y="37.5" width="2" height="30" fill="#fff" stroke="#00ff00"/><rect x="416" y="52" width="1" height="120" fill="#00ff00"/><rect x="415.5" y="63.5" width="2" height="73" fill="#fff" stroke="#00ff00"/><rect x="420" y="136" width="1" height="63" fill="#00ff00"/><rect x="419.5" y="138.5" width="2" height="56" fill="#fff" stroke="#00ff00"/><rect x="424" y="157" width="1" height="51" fill="#00ff00"/><rect x="423.5" y="164.5" width="2" height="29" fill="#000" stroke="#00ff00"/><rect x="428" y="118" width="1" height="62" fill="#00ff00"/><rect x="427.5" y="125.5" width="2" height="38" fill="#000" stroke="#00ff00"/><rect x="432" y="116" width="1" height="26" fill="#00ff00"/><rect x="431.5" y="126.5" width="2" height="14" fill="#fff" stroke="#00ff00"/><rect x="3.5" y="4.5" width="549" height="213" fill="none" stroke="#fff"/><path d="M436.0 5h9l-4.5 5z" fill="#8c9aab" shape-rendering="auto"/><rect x="553" y="9" width="3" height="1" fill="#fff"/><rect x="553" y="43" width="3" height="1" fill="#fff"/><rect x="553" y="77" width="3" height="1" fill="#fff"/><rect x="553" y="111" width="3" height="1" fill="#fff"/><rect x="553" y="145" width="3" height="1" fill="#fff"/><rect x="553" y="179" width="3" height="1" fill="#fff"/><rect x="553" y="213" width="3" height="1" fill="#fff"/><rect x="4" y="218" width="1" height="3" fill="#fff"/><rect x="68" y="218" width="1" height="3" fill="#fff"/><rect x="132" y="218" width="1" height="3" fill="#fff"/><rect x="196" y="218" width="1" height="3" fill="#fff"/><rect x="260" y="218" width="1" height="3" fill="#fff"/><rect x="324" y="218" width="1" height="3" fill="#fff"/><rect x="388" y="218" width="1" height="3" fill="#fff"/></svg><div class="t" style="left:558px;top:4.5px;font-size:10px;color:#fff;transform:scaleX(0.9);transform-origin:0 0">1.29395</div><div class="t" style="left:558px;top:38.5px;font-size:10px;color:#fff;transform:scaleX(0.9);transform-origin:0 0">1.29345</div><div class="t" style="left:558px;top:72.5px;font-size:10px;color:#fff;transform:scaleX(0.9);transform-origin:0 0">1.29295</div><div class="t" style="left:558px;top:106.5px;font-size:10px;color:#fff;transform:scaleX(0.9);transform-origin:0 0">1.29245</div><div class="t" style="left:558px;top:140.5px;font-size:10px;color:#fff;transform:scaleX(0.9);transform-origin:0 0">1.29195</div><div class="t" style="left:558px;top:174.5px;font-size:10px;color:#fff;transform:scaleX(0.9);transform-origin:0 0">1.29145</div><div class="t" style="left:558px;top:208.5px;font-size:10px;color:#fff;transform:scaleX(0.9);transform-origin:0 0">1.29095</div><div class="a" style="left:555px;top:118px;width:39px;height:11px;background:#ff0000"></div><div class="t" style="left:558px;top:118.5px;font-size:10px;color:#000;transform:scaleX(0.9);transform-origin:0 0">1.29227</div><div class="a" style="left:555px;top:134px;width:39px;height:11px;background:#fff"></div><div class="t" style="left:558px;top:134.5px;font-size:10px;color:#000;transform:scaleX(0.9);transform-origin:0 0">1.29204</div><div class="t" style="left:3px;top:221.5px;font-size:10px;color:#fff;transform:scaleX(0.9);transform-origin:0 0">5 Sep 2017</div><div class="t" style="left:67px;top:221.5px;font-size:10px;color:#fff;transform:scaleX(0.9);transform-origin:0 0">5 Sep 03:25</div><div class="t" style="left:131px;top:221.5px;font-size:10px;color:#fff;transform:scaleX(0.9);transform-origin:0 0">5 Sep 04:45</div><div class="t" style="left:195px;top:221.5px;font-size:10px;color:#fff;transform:scaleX(0.9);transform-origin:0 0">5 Sep 06:05</div><div class="t" style="left:259px;top:221.5px;font-size:10px;color:#fff;transform:scaleX(0.9);transform-origin:0 0">5 Sep 07:25</div><div class="t" style="left:323px;top:221.5px;font-size:10px;color:#fff;transform:scaleX(0.9);transform-origin:0 0">5 Sep 08:45</div><div class="t" style="left:387px;top:221.5px;font-size:10px;color:#fff;transform:scaleX(0.9);transform-origin:0 0">5 Sep 10:05</div><div class="t" style="left:534px;top:9px;font-size:10px;color:#fff;transform:translateX(-100%) scaleX(0.91);transform-origin:100% 0">Volume_Scalping_Ea_fix</div><svg class="a" style="left:535px;top:7px" width="13" height="13"><circle cx="6.5" cy="6.5" r="5.5" fill="none" stroke="#fff"/><rect x="4" y="4" width="2" height="2" fill="#fff"/><rect x="7" y="4" width="2" height="2" fill="#fff"/><path d="M3.5 7.5q3 3 6 0" fill="none" stroke="#fff"/></svg></div><div class="a" style="left:10px;top:405px;width:596px;height:1px;background:#9c9c9c"></div><div class="a" style="left:11px;top:406px;width:595px;height:1px;background:#404040"></div><div class="a" style="left:11px;top:405px;width:1px;height:238px;background:#404040"></div><div class="a" style="left:616px;top:96px;width:614px;height:186px;border:1px solid #4a4a4a;border-radius:5px 5px 0 0;box-shadow:inset 0 1px #4a4a4a,inset 0 2px #eef3f9,inset 1px 0 #eef3f9,inset -1px -1px #eef3f9;background:linear-gradient(#c0cedc 0px,#c6d4e3 10px,#cfdbe9 22px,#d6e2ef 31px,#d8e4f0 100%)"></div><svg class="a" style="left:625px;top:107px" width="16" height="16" shape-rendering="crispEdges"><rect x="2.5" y="0.5" width="11" height="8" fill="#fff" stroke="#3d86f0"/><rect x="5.5" y="6.5" width="11" height="8" fill="#fff" stroke="#3d86f0"/><path d="M4 5l2-2 1 2 2-3 2 2" fill="none" stroke="#3d86f0" shape-rendering="auto"/><path d="M7 10l2 2 1.5-3 2 3 2-2" fill="none" stroke="#3d86f0" shape-rendering="auto"/></svg><div class="t" style="left:646px;top:110px;font-size:12.5px;color:#3b3b3b">USDJPY,M5</div><div class="a" style="left:1123px;top:107px;width:31px;height:17px;border:1px solid #8595b3;border-radius:3px;background:linear-gradient(#d6e0ec,#c8d5e5)"></div><div class="a" style="left:1156px;top:107px;width:31px;height:17px;border:1px solid #8595b3;border-radius:3px;background:linear-gradient(#d6e0ec,#c8d5e5)"></div><div class="a" style="left:1189px;top:107px;width:31px;height:17px;border:1px solid #8595b3;border-radius:3px;background:linear-gradient(#d6e0ec,#c8d5e5)"></div><div class="a" style="left:1133px;top:115px;width:12px;height:5px;background:#f4f4f4;border:1px solid #444;border-radius:2px"></div><div class="a" style="left:1166px;top:111px;width:11px;height:10px;background:#f4f4f4;border:1px solid #444;border-radius:1px"></div><div class="a" style="left:1169px;top:114px;width:5px;height:3px;border:1px solid #444"></div><svg class="a" style="left:1198px;top:110px" width="13" height="12"><path d="M2.5 2.5L10.5 9.5M10.5 2.5L2.5 9.5" stroke="#444" stroke-width="4" stroke-linecap="round"/><path d="M2.5 2.5L10.5 9.5M10.5 2.5L2.5 9.5" stroke="#f4f4f4" stroke-width="2"/></svg><div class="a" style="left:624px;top:126px;width:597px;height:147px;border-top:1px solid #d3dfec;border-left:1px solid #9c9c9c;border-right:1px solid #fff;border-bottom:1px solid #fff;background:#000;background-clip:padding-box;overflow:hidden"><svg class="a" style="left:0;top:0" width="595" height="145" shape-rendering="crispEdges"><rect x="3" y="78" width="549" height="1" fill="#ff0000"/><rect x="3" y="82" width="549" height="1" fill="#778899"/><rect x="6" y="5" width="256" height="99" fill="#008080"/><rect x="11.5" y="4.5" width="250" height="93" fill="none" stroke="#a6d6d6" stroke-width="1"/></svg><svg class="a" style="left:7px;top:10px" width="8" height="6"><path d="M0 0h7l-3.5 5z" fill="#fff"/></svg><div class="t" style="left:19px;top:9.3px;font-size:9.4px;color:#fff;transform:scaleX(0.98);transform-origin:0 0">USDJPY,M5&nbsp; 109.413 109.444 109.406 109.413</div><div class="t" style="left:20px;top:6px;font-size:13.6px;letter-spacing:0.2px;color:#fff">Leverage: 1000</div><div class="t" style="left:20px;top:25px;font-size:13.6px;letter-spacing:0.2px;color:#fff">VolumeOrderFlow: 1.50</div><div class="t" style="left:20px;top:44px;font-size:13.6px;letter-spacing:0.2px;color:#00f000">Work Demo Version</div><div class="t" style="left:42px;top:63px;font-size:13.6px;letter-spacing:0.2px;color:#1eaae6">Volume Scalping EA</div><div class="t" style="left:42px;top:82px;font-size:13.6px;letter-spacing:0.2px;color:#fff">Support: info@forex-ea.com</div><svg class="a" style="left:0;top:0" width="595" height="145" shape-rendering="crispEdges"><rect x="4" y="35" width="1" height="5" fill="#00ff00"/><rect x="3.5" y="36.5" width="2" height="2" fill="#fff" stroke="#00ff00"/><rect x="8" y="35" width="1" height="5" fill="#00ff00"/><rect x="7" y="36" width="3" height="1" fill="#00ff00"/><rect x="12" y="29" width="1" height="10" fill="#00ff00"/><rect x="11.5" y="30.5" width="2" height="7" fill="#000" stroke="#00ff00"/><rect x="16" y="25" width="1" height="6" fill="#00ff00"/><rect x="15.5" y="27.5" width="2" height="2" fill="#fff" stroke="#00ff00"/><rect x="20" y="22" width="1" height="7" fill="#00ff00"/><rect x="19" y="25" width="3" height="1" fill="#00ff00"/><rect x="24" y="21" width="1" height="7" fill="#00ff00"/><rect x="23.5" y="25.5" width="2" height="2" fill="#fff" stroke="#00ff00"/><rect x="28" y="19" width="1" height="10" fill="#00ff00"/><rect x="27.5" y="21.5" width="2" height="5" fill="#000" stroke="#00ff00"/><rect x="32" y="17" width="1" height="6" fill="#00ff00"/><rect x="31" y="19" width="3" height="1" fill="#00ff00"/><rect x="36" y="13" width="1" height="9" fill="#00ff00"/><rect x="35.5" y="15.5" width="2" height="5" fill="#000" stroke="#00ff00"/><rect x="40" y="12" width="1" height="6" fill="#00ff00"/><rect x="39" y="15" width="3" height="1" fill="#00ff00"/><rect x="44" y="14" width="1" height="6" fill="#00ff00"/><rect x="43" y="16" width="3" height="1" fill="#00ff00"/><rect x="48" y="16" width="1" height="12" fill="#00ff00"/><rect x="47.5" y="17.5" width="2" height="9" fill="#fff" stroke="#00ff00"/><rect x="52" y="26" width="1" height="5" fill="#00ff00"/><rect x="51" y="27" width="3" height="1" fill="#00ff00"/><rect x="56" y="27" width="1" height="8" fill="#00ff00"/><rect x="55.5" y="29.5" width="2" height="2" fill="#000" stroke="#00ff00"/><rect x="60" y="25" width="1" height="6" fill="#00ff00"/><rect x="59" y="27" width="3" height="1" fill="#00ff00"/><rect x="64" y="27" width="1" height="13" fill="#00ff00"/><rect x="63" y="29" width="3" height="1" fill="#00ff00"/><rect x="68" y="28" width="1" height="6" fill="#00ff00"/><rect x="67" y="29" width="3" height="1" fill="#00ff00"/><rect x="72" y="27" width="1" height="13" fill="#00ff00"/><rect x="71" y="29" width="3" height="1" fill="#00ff00"/><rect x="76" y="26" width="1" height="7" fill="#00ff00"/><rect x="75.5" y="28.5" width="2" height="3" fill="#000" stroke="#00ff00"/><rect x="80" y="25" width="1" height="5" fill="#00ff00"/><rect x="79" y="27" width="3" height="1" fill="#00ff00"/><rect x="84" y="26" width="1" height="4" fill="#00ff00"/><rect x="83.5" y="27.5" width="2" height="2" fill="#fff" stroke="#00ff00"/><rect x="88" y="27" width="1" height="19" fill="#00ff00"/><rect x="87.5" y="28.5" width="2" height="16" fill="#fff" stroke="#00ff00"/><rect x="92" y="41" width="1" height="19" fill="#00ff00"/><rect x="91.5" y="43.5" width="2" height="14" fill="#fff" stroke="#00ff00"/><rect x="96" y="56" width="1" height="15" fill="#00ff00"/><rect x="95.5" y="57.5" width="2" height="12" fill="#fff" stroke="#00ff00"/><rect x="100" y="61" width="1" height="11" fill="#00ff00"/><rect x="99.5" y="62.5" width="2" height="7" fill="#000" stroke="#00ff00"/><rect x="104" y="60" width="1" height="8" fill="#00ff00"/><rect x="103" y="61" width="3" height="1" fill="#00ff00"/><rect x="108" y="59" width="1" height="7" fill="#00ff00"/><rect x="107" y="60" width="3" height="1" fill="#00ff00"/><rect x="112" y="55" width="1" height="8" fill="#00ff00"/><rect x="111.5" y="56.5" width="2" height="5" fill="#000" stroke="#00ff00"/><rect x="116" y="54" width="1" height="8" fill="#00ff00"/><rect x="115" y="55" width="3" height="1" fill="#00ff00"/><rect x="120" y="54" width="1" height="7" fill="#00ff00"/><rect x="119.5" y="55.5" width="2" height="4" fill="#fff" stroke="#00ff00"/><rect x="124" y="56" width="1" height="7" fill="#00ff00"/><rect x="123.5" y="59.5" width="2" height="2" fill="#fff" stroke="#00ff00"/><rect x="128" y="59" width="1" height="17" fill="#00ff00"/><rect x="127.5" y="59.5" width="2" height="10" fill="#fff" stroke="#00ff00"/><rect x="132" y="63" width="1" height="9" fill="#00ff00"/><rect x="131.5" y="65.5" width="2" height="4" fill="#000" stroke="#00ff00"/><rect x="136" y="63" width="1" height="9" fill="#00ff00"/><rect x="135" y="65" width="3" height="1" fill="#00ff00"/><rect x="140" y="61" width="1" height="8" fill="#00ff00"/><rect x="139.5" y="62.5" width="2" height="5" fill="#000" stroke="#00ff00"/><rect x="144" y="60" width="1" height="6" fill="#00ff00"/><rect x="143" y="61" width="3" height="1" fill="#00ff00"/><rect x="148" y="61" width="1" height="11" fill="#00ff00"/><rect x="147.5" y="62.5" width="2" height="7" fill="#fff" stroke="#00ff00"/><rect x="152" y="68" width="1" height="8" fill="#00ff00"/><rect x="151.5" y="69.5" width="2" height="5" fill="#fff" stroke="#00ff00"/><rect x="156" y="69" width="1" height="45" fill="#00ff00"/><rect x="155.5" y="74.5" width="2" height="28" fill="#fff" stroke="#00ff00"/><rect x="160" y="94" width="1" height="15" fill="#00ff00"/><rect x="159.5" y="95.5" width="2" height="7" fill="#000" stroke="#00ff00"/><rect x="164" y="93" width="1" height="10" fill="#00ff00"/><rect x="163.5" y="94.5" width="2" height="2" fill="#fff" stroke="#00ff00"/><rect x="168" y="93" width="1" height="13" fill="#00ff00"/><rect x="167.5" y="94.5" width="2" height="5" fill="#fff" stroke="#00ff00"/><rect x="172" y="92" width="1" height="10" fill="#00ff00"/><rect x="171.5" y="94.5" width="2" height="5" fill="#000" stroke="#00ff00"/><rect x="176" y="92" width="1" height="9" fill="#00ff00"/><rect x="175.5" y="93.5" width="2" height="6" fill="#fff" stroke="#00ff00"/><rect x="180" y="97" width="1" height="10" fill="#00ff00"/><rect x="179.5" y="100.5" width="2" height="2" fill="#fff" stroke="#00ff00"/><rect x="184" y="94" width="1" height="10" fill="#00ff00"/><rect x="183.5" y="96.5" width="2" height="6" fill="#000" stroke="#00ff00"/><rect x="188" y="95" width="1" height="7" fill="#00ff00"/><rect x="187" y="97" width="3" height="1" fill="#00ff00"/><rect x="192" y="95" width="1" height="8" fill="#00ff00"/><rect x="191" y="99" width="3" height="1" fill="#00ff00"/><rect x="196" y="95" width="1" height="10" fill="#00ff00"/><rect x="195.5" y="99.5" width="2" height="5" fill="#fff" stroke="#00ff00"/><rect x="200" y="102" width="1" height="13" fill="#00ff00"/><rect x="199.5" y="103.5" width="2" height="4" fill="#fff" stroke="#00ff00"/><rect x="204" y="105" width="1" height="12" fill="#00ff00"/><rect x="203.5" y="107.5" width="2" height="8" fill="#fff" stroke="#00ff00"/><rect x="208" y="111" width="1" height="6" fill="#00ff00"/><rect x="207.5" y="112.5" width="2" height="2" fill="#fff" stroke="#00ff00"/><rect x="212" y="112" width="1" height="10" fill="#00ff00"/><rect x="211" y="113" width="3" height="1" fill="#00ff00"/><rect x="216" y="110" width="1" height="11" fill="#00ff00"/><rect x="215.5" y="111.5" width="2" height="4" fill="#000" stroke="#00ff00"/><rect x="220" y="109" width="1" height="6" fill="#00ff00"/><rect x="219" y="111" width="3" height="1" fill="#00ff00"/><rect x="224" y="109" width="1" height="6" fill="#00ff00"/><rect x="223.5" y="109.5" width="2" height="4" fill="#000" stroke="#00ff00"/><rect x="228" y="108" width="1" height="7" fill="#00ff00"/><rect x="227.5" y="109.5" width="2" height="3" fill="#000" stroke="#00ff00"/><rect x="232" y="104" width="1" height="10" fill="#00ff00"/><rect x="231.5" y="105.5" width="2" height="7" fill="#000" stroke="#00ff00"/><rect x="236" y="106" width="1" height="5" fill="#00ff00"/><rect x="235.5" y="107.5" width="2" height="2" fill="#fff" stroke="#00ff00"/><rect x="240" y="105" width="1" height="6" fill="#00ff00"/><rect x="239" y="107" width="3" height="1" fill="#00ff00"/><rect x="244" y="101" width="1" height="8" fill="#00ff00"/><rect x="243.5" y="102.5" width="2" height="5" fill="#000" stroke="#00ff00"/><rect x="248" y="98" width="1" height="6" fill="#00ff00"/><rect x="247" y="101" width="3" height="1" fill="#00ff00"/><rect x="252" y="97" width="1" height="6" fill="#00ff00"/><rect x="251.5" y="99.5" width="2" height="2" fill="#fff" stroke="#00ff00"/><rect x="256" y="98" width="1" height="10" fill="#00ff00"/><rect x="255.5" y="99.5" width="2" height="7" fill="#fff" stroke="#00ff00"/><rect x="260" y="102" width="1" height="8" fill="#00ff00"/><rect x="259" y="105" width="3" height="1" fill="#00ff00"/><rect x="264" y="103" width="1" height="5" fill="#00ff00"/><rect x="263" y="105" width="3" height="1" fill="#00ff00"/><rect x="268" y="104" width="1" height="6" fill="#00ff00"/><rect x="267" y="105" width="3" height="1" fill="#00ff00"/><rect x="272" y="105" width="1" height="6" fill="#00ff00"/><rect x="271.5" y="106.5" width="2" height="3" fill="#fff" stroke="#00ff00"/><rect x="276" y="104" width="1" height="6" fill="#00ff00"/><rect x="275.5" y="105.5" width="2" height="4" fill="#000" stroke="#00ff00"/><rect x="280" y="100" width="1" height="7" fill="#00ff00"/><rect x="279.5" y="101.5" width="2" height="4" fill="#000" stroke="#00ff00"/><rect x="284" y="92" width="1" height="10" fill="#00ff00"/><rect x="283.5" y="95.5" width="2" height="6" fill="#000" stroke="#00ff00"/><rect x="288" y="94" width="1" height="5" fill="#00ff00"/><rect x="287.5" y="95.5" width="2" height="2" fill="#fff" stroke="#00ff00"/><rect x="292" y="95" width="1" height="6" fill="#00ff00"/><rect x="291" y="97" width="3" height="1" fill="#00ff00"/><rect x="296" y="93" width="1" height="7" fill="#00ff00"/><rect x="295.5" y="97.5" width="2" height="2" fill="#fff" stroke="#00ff00"/><rect x="300" y="92" width="1" height="8" fill="#00ff00"/><rect x="299.5" y="95.5" width="2" height="4" fill="#000" stroke="#00ff00"/><rect x="304" y="94" width="1" height="12" fill="#00ff00"/><rect x="303.5" y="95.5" width="2" height="9" fill="#fff" stroke="#00ff00"/><rect x="308" y="102" width="1" height="4" fill="#00ff00"/><rect x="307.5" y="102.5" width="2" height="2" fill="#fff" stroke="#00ff00"/><rect x="312" y="99" width="1" height="5" fill="#00ff00"/><rect x="311" y="101" width="3" height="1" fill="#00ff00"/><rect x="316" y="99" width="1" height="5" fill="#00ff00"/><rect x="315" y="101" width="3" height="1" fill="#00ff00"/><rect x="320" y="97" width="1" height="7" fill="#00ff00"/><rect x="319.5" y="99.5" width="2" height="3" fill="#fff" stroke="#00ff00"/><rect x="324" y="100" width="1" height="8" fill="#00ff00"/><rect x="323.5" y="101.5" width="2" height="5" fill="#fff" stroke="#00ff00"/><rect x="328" y="102" width="1" height="6" fill="#00ff00"/><rect x="327" y="104" width="3" height="1" fill="#00ff00"/><rect x="332" y="100" width="1" height="8" fill="#00ff00"/><rect x="331" y="102" width="3" height="1" fill="#00ff00"/><rect x="336" y="95" width="1" height="13" fill="#00ff00"/><rect x="335.5" y="99.5" width="2" height="3" fill="#000" stroke="#00ff00"/><rect x="340" y="89" width="1" height="12" fill="#00ff00"/><rect x="339.5" y="89.5" width="2" height="10" fill="#000" stroke="#00ff00"/><rect x="344" y="82" width="1" height="11" fill="#00ff00"/><rect x="343.5" y="87.5" width="2" height="2" fill="#000" stroke="#00ff00"/><rect x="348" y="77" width="1" height="11" fill="#00ff00"/><rect x="347.5" y="81.5" width="2" height="6" fill="#000" stroke="#00ff00"/><rect x="352" y="81" width="1" height="6" fill="#00ff00"/><rect x="351.5" y="81.5" width="2" height="4" fill="#fff" stroke="#00ff00"/><rect x="356" y="84" width="1" height="8" fill="#00ff00"/><rect x="355" y="85" width="3" height="1" fill="#00ff00"/><rect x="360" y="85" width="1" height="11" fill="#00ff00"/><rect x="359.5" y="86.5" width="2" height="6" fill="#fff" stroke="#00ff00"/><rect x="364" y="89" width="1" height="8" fill="#00ff00"/><rect x="363" y="92" width="3" height="1" fill="#00ff00"/><rect x="368" y="87" width="1" height="16" fill="#00ff00"/><rect x="367.5" y="91.5" width="2" height="8" fill="#fff" stroke="#00ff00"/><rect x="372" y="96" width="1" height="6" fill="#00ff00"/><rect x="371" y="98" width="3" height="1" fill="#00ff00"/><rect x="376" y="97" width="1" height="14" fill="#00ff00"/><rect x="375.5" y="98.5" width="2" height="11" fill="#fff" stroke="#00ff00"/><rect x="380" y="101" width="1" height="13" fill="#00ff00"/><rect x="379.5" y="102.5" width="2" height="7" fill="#000" stroke="#00ff00"/><rect x="384" y="102" width="1" height="8" fill="#00ff00"/><rect x="383.5" y="103.5" width="2" height="2" fill="#fff" stroke="#00ff00"/><rect x="388" y="89" width="1" height="21" fill="#00ff00"/><rect x="387.5" y="90.5" width="2" height="14" fill="#000" stroke="#00ff00"/><rect x="392" y="87" width="1" height="9" fill="#00ff00"/><rect x="391" y="90" width="3" height="1" fill="#00ff00"/><rect x="396" y="79" width="1" height="16" fill="#00ff00"/><rect x="395.5" y="80.5" width="2" height="10" fill="#000" stroke="#00ff00"/><rect x="400" y="81" width="1" height="6" fill="#00ff00"/><rect x="399.5" y="82.5" width="2" height="2" fill="#fff" stroke="#00ff00"/><rect x="404" y="82" width="1" height="13" fill="#00ff00"/><rect x="403.5" y="83.5" width="2" height="9" fill="#fff" stroke="#00ff00"/><rect x="408" y="89" width="1" height="5" fill="#00ff00"/><rect x="407" y="91" width="3" height="1" fill="#00ff00"/><rect x="412" y="83" width="1" height="15" fill="#00ff00"/><rect x="411.5" y="84.5" width="2" height="7" fill="#000" stroke="#00ff00"/><rect x="416" y="81" width="1" height="8" fill="#00ff00"/><rect x="415" y="83" width="3" height="1" fill="#00ff00"/><rect x="420" y="74" width="1" height="10" fill="#00ff00"/><rect x="419.5" y="79.5" width="2" height="3" fill="#000" stroke="#00ff00"/><rect x="424" y="69" width="1" height="12" fill="#00ff00"/><rect x="423" y="78" width="3" height="1" fill="#00ff00"/><rect x="428" y="77" width="1" height="6" fill="#00ff00"/><rect x="427" y="78" width="3" height="1" fill="#00ff00"/><rect x="432" y="77" width="1" height="8" fill="#00ff00"/><rect x="431.5" y="78.5" width="2" height="5" fill="#fff" stroke="#00ff00"/><rect x="3.5" y="4.5" width="549" height="120" fill="none" stroke="#fff"/><path d="M436.0 5h9l-4.5 5z" fill="#8c9aab" shape-rendering="auto"/><rect x="553" y="22" width="3" height="1" fill="#fff"/><rect x="553" y="55" width="3" height="1" fill="#fff"/><rect x="553" y="88" width="3" height="1" fill="#fff"/><rect x="553" y="121" width="3" height="1" fill="#fff"/><rect x="4" y="125" width="1" height="3" fill="#fff"/><rect x="68" y="125" width="1" height="3" fill="#fff"/><rect x="132" y="125" width="1" height="3" fill="#fff"/><rect x="196" y="125" width="1" height="3" fill="#fff"/><rect x="260" y="125" width="1" height="3" fill="#fff"/><rect x="324" y="125" width="1" height="3" fill="#fff"/><rect x="388" y="125" width="1" height="3" fill="#fff"/></svg><div class="t" style="left:558px;top:17.5px;font-size:10px;color:#fff;transform:scaleX(0.9);transform-origin:0 0">109.765</div><div class="t" style="left:558px;top:50.5px;font-size:10px;color:#fff;transform:scaleX(0.9);transform-origin:0 0">109.570</div><div class="t" style="left:558px;top:83.5px;font-size:10px;color:#fff;transform:scaleX(0.9);transform-origin:0 0">109.375</div><div class="t" style="left:558px;top:116.5px;font-size:10px;color:#fff;transform:scaleX(0.9);transform-origin:0 0">109.185</div><div class="a" style="left:555px;top:73px;width:39px;height:11px;background:#ff0000"></div><div class="t" style="left:558px;top:73.5px;font-size:10px;color:#000;transform:scaleX(0.9);transform-origin:0 0">109.424</div><div class="a" style="left:555px;top:77px;width:39px;height:11px;background:#fff"></div><div class="t" style="left:558px;top:77.5px;font-size:10px;color:#000;transform:scaleX(0.9);transform-origin:0 0">109.413</div><div class="t" style="left:3px;top:128.5px;font-size:10px;color:#fff;transform:scaleX(0.9);transform-origin:0 0">5 Sep 2017</div><div class="t" style="left:67px;top:128.5px;font-size:10px;color:#fff;transform:scaleX(0.9);transform-origin:0 0">5 Sep 03:25</div><div class="t" style="left:131px;top:128.5px;font-size:10px;color:#fff;transform:scaleX(0.9);transform-origin:0 0">5 Sep 04:45</div><div class="t" style="left:195px;top:128.5px;font-size:10px;color:#fff;transform:scaleX(0.9);transform-origin:0 0">5 Sep 06:05</div><div class="t" style="left:259px;top:128.5px;font-size:10px;color:#fff;transform:scaleX(0.9);transform-origin:0 0">5 Sep 07:25</div><div class="t" style="left:323px;top:128.5px;font-size:10px;color:#fff;transform:scaleX(0.9);transform-origin:0 0">5 Sep 08:45</div><div class="t" style="left:387px;top:128.5px;font-size:10px;color:#fff;transform:scaleX(0.9);transform-origin:0 0">5 Sep 10:05</div><div class="t" style="left:534px;top:9px;font-size:10px;color:#fff;transform:translateX(-100%) scaleX(0.91);transform-origin:100% 0">Volume_Scalping_Ea_fix</div><svg class="a" style="left:535px;top:7px" width="13" height="13"><circle cx="6.5" cy="6.5" r="5.5" fill="none" stroke="#fff"/><rect x="4" y="4" width="2" height="2" fill="#fff"/><rect x="7" y="4" width="2" height="2" fill="#fff"/><path d="M3.5 7.5q3 3 6 0" fill="none" stroke="#fff"/></svg></div><div class="a" style="left:624px;top:127px;width:596px;height:1px;background:#9c9c9c"></div><div class="a" style="left:625px;top:128px;width:595px;height:1px;background:#404040"></div><div class="a" style="left:625px;top:127px;width:1px;height:145px;background:#404040"></div><div class="a" style="left:616px;top:281px;width:614px;height:186px;border:1px solid #4a4a4a;border-radius:5px 5px 0 0;box-shadow:inset 0 1px #4a4a4a,inset 0 2px #eef3f9,inset 1px 0 #eef3f9,inset -1px -1px #eef3f9;background:linear-gradient(#c0cedc 0px,#c6d4e3 10px,#cfdbe9 22px,#d6e2ef 31px,#d8e4f0 100%)"></div><svg class="a" style="left:625px;top:292px" width="16" height="16" shape-rendering="crispEdges"><rect x="2.5" y="0.5" width="11" height="8" fill="#fff" stroke="#3d86f0"/><rect x="5.5" y="6.5" width="11" height="8" fill="#fff" stroke="#3d86f0"/><path d="M4 5l2-2 1 2 2-3 2 2" fill="none" stroke="#3d86f0" shape-rendering="auto"/><path d="M7 10l2 2 1.5-3 2 3 2-2" fill="none" stroke="#3d86f0" shape-rendering="auto"/></svg><div class="t" style="left:646px;top:295px;font-size:12.5px;color:#3b3b3b">EURJPY,M5</div><div class="a" style="left:1123px;top:292px;width:31px;height:17px;border:1px solid #8595b3;border-radius:3px;background:linear-gradient(#d6e0ec,#c8d5e5)"></div><div class="a" style="left:1156px;top:292px;width:31px;height:17px;border:1px solid #8595b3;border-radius:3px;background:linear-gradient(#d6e0ec,#c8d5e5)"></div><div class="a" style="left:1189px;top:292px;width:31px;height:17px;border:1px solid #8595b3;border-radius:3px;background:linear-gradient(#d6e0ec,#c8d5e5)"></div><div class="a" style="left:1133px;top:300px;width:12px;height:5px;background:#f4f4f4;border:1px solid #444;border-radius:2px"></div><div class="a" style="left:1166px;top:296px;width:11px;height:10px;background:#f4f4f4;border:1px solid #444;border-radius:1px"></div><div class="a" style="left:1169px;top:299px;width:5px;height:3px;border:1px solid #444"></div><svg class="a" style="left:1198px;top:295px" width="13" height="12"><path d="M2.5 2.5L10.5 9.5M10.5 2.5L2.5 9.5" stroke="#444" stroke-width="4" stroke-linecap="round"/><path d="M2.5 2.5L10.5 9.5M10.5 2.5L2.5 9.5" stroke="#f4f4f4" stroke-width="2"/></svg><div class="a" style="left:624px;top:311px;width:597px;height:147px;border-top:1px solid #d3dfec;border-left:1px solid #9c9c9c;border-right:1px solid #fff;border-bottom:1px solid #fff;background:#000;background-clip:padding-box;overflow:hidden"><svg class="a" style="left:0;top:0" width="595" height="145" shape-rendering="crispEdges"><rect x="3" y="104" width="549" height="1" fill="#778899"/><rect x="6" y="5" width="256" height="99" fill="#008080"/><rect x="11.5" y="4.5" width="250" height="93" fill="none" stroke="#a6d6d6" stroke-width="1"/></svg><svg class="a" style="left:7px;top:10px" width="8" height="6"><path d="M0 0h7l-3.5 5z" fill="#fff"/></svg><div class="t" style="left:19px;top:9.3px;font-size:9.4px;color:#fff;transform:scaleX(0.98);transform-origin:0 0">EURJPY,M5&nbsp; 129.978 130.012 129.969 129.977</div><div class="t" style="left:20px;top:6px;font-size:13.6px;letter-spacing:0.2px;color:#fff">Leverage: 1000</div><div class="t" style="left:20px;top:25px;font-size:13.6px;letter-spacing:0.2px;color:#fff">VolumeOrderFlow: 1.50</div><div class="t" style="left:20px;top:44px;font-size:13.6px;letter-spacing:0.2px;color:#00f000">Work Demo Version</div><div class="t" style="left:42px;top:63px;font-size:13.6px;letter-spacing:0.2px;color:#1eaae6">Volume Scalping EA</div><div class="t" style="left:42px;top:82px;font-size:13.6px;letter-spacing:0.2px;color:#fff">Support: info@forex-ea.com</div><svg class="a" style="left:0;top:0" width="595" height="145" shape-rendering="crispEdges"><rect x="4" y="30" width="1" height="5" fill="#00ff00"/><rect x="3.5" y="31.5" width="2" height="3" fill="#fff" stroke="#00ff00"/><rect x="8" y="30" width="1" height="5" fill="#00ff00"/><rect x="7" y="32" width="3" height="1" fill="#00ff00"/><rect x="12" y="27" width="1" height="7" fill="#00ff00"/><rect x="11" y="29" width="3" height="1" fill="#00ff00"/><rect x="16" y="24" width="1" height="5" fill="#00ff00"/><rect x="15.5" y="25.5" width="2" height="2" fill="#fff" stroke="#00ff00"/><rect x="20" y="20" width="1" height="7" fill="#00ff00"/><rect x="19.5" y="22.5" width="2" height="3" fill="#000" stroke="#00ff00"/><rect x="24" y="19" width="1" height="8" fill="#00ff00"/><rect x="23" y="22" width="3" height="1" fill="#00ff00"/><rect x="28" y="19" width="1" height="8" fill="#00ff00"/><rect x="27.5" y="20.5" width="2" height="3" fill="#000" stroke="#00ff00"/><rect x="32" y="17" width="1" height="7" fill="#00ff00"/><rect x="31" y="20" width="3" height="1" fill="#00ff00"/><rect x="36" y="14" width="1" height="10" fill="#00ff00"/><rect x="35.5" y="17.5" width="2" height="5" fill="#000" stroke="#00ff00"/><rect x="40" y="15" width="1" height="5" fill="#00ff00"/><rect x="39" y="17" width="3" height="1" fill="#00ff00"/><rect x="44" y="14" width="1" height="7" fill="#00ff00"/><rect x="43" y="19" width="3" height="1" fill="#00ff00"/><rect x="48" y="18" width="1" height="10" fill="#00ff00"/><rect x="47.5" y="19.5" width="2" height="7" fill="#fff" stroke="#00ff00"/><rect x="52" y="23" width="1" height="8" fill="#00ff00"/><rect x="51" y="27" width="3" height="1" fill="#00ff00"/><rect x="56" y="26" width="1" height="7" fill="#00ff00"/><rect x="55.5" y="27.5" width="2" height="2" fill="#000" stroke="#00ff00"/><rect x="60" y="24" width="1" height="9" fill="#00ff00"/><rect x="59" y="27" width="3" height="1" fill="#00ff00"/><rect x="64" y="26" width="1" height="9" fill="#00ff00"/><rect x="63.5" y="27.5" width="2" height="5" fill="#fff" stroke="#00ff00"/><rect x="68" y="31" width="1" height="5" fill="#00ff00"/><rect x="67.5" y="32.5" width="2" height="2" fill="#fff" stroke="#00ff00"/><rect x="72" y="29" width="1" height="9" fill="#00ff00"/><rect x="71.5" y="30.5" width="2" height="2" fill="#000" stroke="#00ff00"/><rect x="76" y="26" width="1" height="6" fill="#00ff00"/><rect x="75.5" y="28.5" width="2" height="2" fill="#000" stroke="#00ff00"/><rect x="80" y="26" width="1" height="3" fill="#00ff00"/><rect x="79" y="27" width="3" height="1" fill="#00ff00"/><rect x="84" y="26" width="1" height="5" fill="#00ff00"/><rect x="83" y="27" width="3" height="1" fill="#00ff00"/><rect x="88" y="26" width="1" height="19" fill="#00ff00"/><rect x="87.5" y="27.5" width="2" height="16" fill="#fff" stroke="#00ff00"/><rect x="92" y="38" width="1" height="11" fill="#00ff00"/><rect x="91.5" y="42.5" width="2" height="5" fill="#fff" stroke="#00ff00"/><rect x="96" y="48" width="1" height="10" fill="#00ff00"/><rect x="95" y="50" width="3" height="1" fill="#00ff00"/><rect x="100" y="49" width="1" height="8" fill="#00ff00"/><rect x="99" y="52" width="3" height="1" fill="#00ff00"/><rect x="104" y="48" width="1" height="8" fill="#00ff00"/><rect x="103" y="50" width="3" height="1" fill="#00ff00"/><rect x="108" y="49" width="1" height="9" fill="#00ff00"/><rect x="107" y="51" width="3" height="1" fill="#00ff00"/><rect x="112" y="49" width="1" height="7" fill="#00ff00"/><rect x="111" y="51" width="3" height="1" fill="#00ff00"/><rect x="116" y="50" width="1" height="7" fill="#00ff00"/><rect x="115.5" y="52.5" width="2" height="3" fill="#fff" stroke="#00ff00"/><rect x="120" y="50" width="1" height="9" fill="#00ff00"/><rect x="119.5" y="52.5" width="2" height="3" fill="#000" stroke="#00ff00"/><rect x="124" y="51" width="1" height="6" fill="#00ff00"/><rect x="123" y="53" width="3" height="1" fill="#00ff00"/><rect x="128" y="53" width="1" height="10" fill="#00ff00"/><rect x="127.5" y="55.5" width="2" height="3" fill="#000" stroke="#00ff00"/><rect x="132" y="53" width="1" height="7" fill="#00ff00"/><rect x="131.5" y="56.5" width="2" height="2" fill="#000" stroke="#00ff00"/><rect x="136" y="51" width="1" height="8" fill="#00ff00"/><rect x="135" y="55" width="3" height="1" fill="#00ff00"/><rect x="140" y="52" width="1" height="7" fill="#00ff00"/><rect x="139" y="56" width="3" height="1" fill="#00ff00"/><rect x="144" y="51" width="1" height="6" fill="#00ff00"/><rect x="143.5" y="53.5" width="2" height="2" fill="#000" stroke="#00ff00"/><rect x="148" y="52" width="1" height="5" fill="#00ff00"/><rect x="147" y="53" width="3" height="1" fill="#00ff00"/><rect x="152" y="56" width="1" height="9" fill="#00ff00"/><rect x="151.5" y="56.5" width="2" height="6" fill="#fff" stroke="#00ff00"/><rect x="156" y="60" width="1" height="40" fill="#00ff00"/><rect x="155.5" y="61.5" width="2" height="22" fill="#fff" stroke="#00ff00"/><rect x="160" y="83" width="1" height="8" fill="#00ff00"/><rect x="159.5" y="84.5" width="2" height="5" fill="#000" stroke="#00ff00"/><rect x="164" y="83" width="1" height="6" fill="#00ff00"/><rect x="163.5" y="84.5" width="2" height="2" fill="#fff" stroke="#00ff00"/><rect x="168" y="83" width="1" height="7" fill="#00ff00"/><rect x="167.5" y="84.5" width="2" height="2" fill="#000" stroke="#00ff00"/><rect x="172" y="74" width="1" height="15" fill="#00ff00"/><rect x="171.5" y="75.5" width="2" height="12" fill="#000" stroke="#00ff00"/><rect x="176" y="74" width="1" height="11" fill="#00ff00"/><rect x="175.5" y="75.5" width="2" height="8" fill="#fff" stroke="#00ff00"/><rect x="180" y="77" width="1" height="10" fill="#00ff00"/><rect x="179.5" y="77.5" width="2" height="6" fill="#000" stroke="#00ff00"/><rect x="184" y="70" width="1" height="11" fill="#00ff00"/><rect x="183" y="77" width="3" height="1" fill="#00ff00"/><rect x="188" y="74" width="1" height="7" fill="#00ff00"/><rect x="187" y="78" width="3" height="1" fill="#00ff00"/><rect x="192" y="76" width="1" height="7" fill="#00ff00"/><rect x="191" y="79" width="3" height="1" fill="#00ff00"/><rect x="196" y="74" width="1" height="12" fill="#00ff00"/><rect x="195.5" y="79.5" width="2" height="5" fill="#fff" stroke="#00ff00"/><rect x="200" y="82" width="1" height="9" fill="#00ff00"/><rect x="199.5" y="84.5" width="2" height="5" fill="#fff" stroke="#00ff00"/><rect x="204" y="82" width="1" height="13" fill="#00ff00"/><rect x="203.5" y="89.5" width="2" height="4" fill="#fff" stroke="#00ff00"/><rect x="208" y="90" width="1" height="7" fill="#00ff00"/><rect x="207" y="92" width="3" height="1" fill="#00ff00"/><rect x="212" y="89" width="1" height="12" fill="#00ff00"/><rect x="211" y="92" width="3" height="1" fill="#00ff00"/><rect x="216" y="87" width="1" height="11" fill="#00ff00"/><rect x="215.5" y="88.5" width="2" height="4" fill="#000" stroke="#00ff00"/><rect x="220" y="87" width="1" height="4" fill="#00ff00"/><rect x="219" y="88" width="3" height="1" fill="#00ff00"/><rect x="224" y="85" width="1" height="5" fill="#00ff00"/><rect x="223.5" y="86.5" width="2" height="2" fill="#fff" stroke="#00ff00"/><rect x="228" y="84" width="1" height="6" fill="#00ff00"/><rect x="227" y="86" width="3" height="1" fill="#00ff00"/><rect x="232" y="84" width="1" height="5" fill="#00ff00"/><rect x="231" y="86" width="3" height="1" fill="#00ff00"/><rect x="236" y="84" width="1" height="7" fill="#00ff00"/><rect x="235" y="87" width="3" height="1" fill="#00ff00"/><rect x="240" y="86" width="1" height="5" fill="#00ff00"/><rect x="239" y="87" width="3" height="1" fill="#00ff00"/><rect x="244" y="81" width="1" height="9" fill="#00ff00"/><rect x="243.5" y="82.5" width="2" height="7" fill="#000" stroke="#00ff00"/><rect x="248" y="79" width="1" height="6" fill="#00ff00"/><rect x="247.5" y="80.5" width="2" height="2" fill="#fff" stroke="#00ff00"/><rect x="252" y="78" width="1" height="5" fill="#00ff00"/><rect x="251" y="79" width="3" height="1" fill="#00ff00"/><rect x="256" y="74" width="1" height="9" fill="#00ff00"/><rect x="255" y="80" width="3" height="1" fill="#00ff00"/><rect x="260" y="80" width="1" height="7" fill="#00ff00"/><rect x="259" y="82" width="3" height="1" fill="#00ff00"/><rect x="264" y="78" width="1" height="10" fill="#00ff00"/><rect x="263.5" y="79.5" width="2" height="5" fill="#000" stroke="#00ff00"/><rect x="268" y="77" width="1" height="9" fill="#00ff00"/><rect x="267.5" y="78.5" width="2" height="2" fill="#fff" stroke="#00ff00"/><rect x="272" y="79" width="1" height="7" fill="#00ff00"/><rect x="271" y="82" width="3" height="1" fill="#00ff00"/><rect x="276" y="79" width="1" height="7" fill="#00ff00"/><rect x="275.5" y="79.5" width="2" height="4" fill="#000" stroke="#00ff00"/><rect x="280" y="77" width="1" height="6" fill="#00ff00"/><rect x="279" y="79" width="3" height="1" fill="#00ff00"/><rect x="284" y="73" width="1" height="7" fill="#00ff00"/><rect x="283" y="77" width="3" height="1" fill="#00ff00"/><rect x="288" y="74" width="1" height="6" fill="#00ff00"/><rect x="287" y="77" width="3" height="1" fill="#00ff00"/><rect x="292" y="74" width="1" height="7" fill="#00ff00"/><rect x="291.5" y="75.5" width="2" height="4" fill="#000" stroke="#00ff00"/><rect x="296" y="72" width="1" height="7" fill="#00ff00"/><rect x="295" y="77" width="3" height="1" fill="#00ff00"/><rect x="300" y="74" width="1" height="7" fill="#00ff00"/><rect x="299.5" y="77.5" width="2" height="2" fill="#fff" stroke="#00ff00"/><rect x="304" y="78" width="1" height="13" fill="#00ff00"/><rect x="303.5" y="78.5" width="2" height="8" fill="#fff" stroke="#00ff00"/><rect x="308" y="85" width="1" height="4" fill="#00ff00"/><rect x="307" y="86" width="3" height="1" fill="#00ff00"/><rect x="312" y="83" width="1" height="4" fill="#00ff00"/><rect x="311" y="85" width="3" height="1" fill="#00ff00"/><rect x="316" y="81" width="1" height="6" fill="#00ff00"/><rect x="315" y="83" width="3" height="1" fill="#00ff00"/><rect x="320" y="81" width="1" height="5" fill="#00ff00"/><rect x="319.5" y="82.5" width="2" height="2" fill="#fff" stroke="#00ff00"/><rect x="324" y="82" width="1" height="6" fill="#00ff00"/><rect x="323.5" y="83.5" width="2" height="3" fill="#fff" stroke="#00ff00"/><rect x="328" y="82" width="1" height="6" fill="#00ff00"/><rect x="327.5" y="84.5" width="2" height="2" fill="#fff" stroke="#00ff00"/><rect x="332" y="82" width="1" height="5" fill="#00ff00"/><rect x="331" y="84" width="3" height="1" fill="#00ff00"/><rect x="336" y="79" width="1" height="9" fill="#00ff00"/><rect x="335.5" y="82.5" width="2" height="2" fill="#fff" stroke="#00ff00"/><rect x="340" y="79" width="1" height="8" fill="#00ff00"/><rect x="339" y="81" width="3" height="1" fill="#00ff00"/><rect x="344" y="77" width="1" height="11" fill="#00ff00"/><rect x="343" y="82" width="3" height="1" fill="#00ff00"/><rect x="348" y="77" width="1" height="7" fill="#00ff00"/><rect x="347" y="82" width="3" height="1" fill="#00ff00"/><rect x="352" y="74" width="1" height="10" fill="#00ff00"/><rect x="351.5" y="80.5" width="2" height="2" fill="#fff" stroke="#00ff00"/><rect x="356" y="77" width="1" height="8" fill="#00ff00"/><rect x="355" y="79" width="3" height="1" fill="#00ff00"/><rect x="360" y="79" width="1" height="9" fill="#00ff00"/><rect x="359.5" y="80.5" width="2" height="3" fill="#fff" stroke="#00ff00"/><rect x="364" y="82" width="1" height="9" fill="#00ff00"/><rect x="363.5" y="84.5" width="2" height="4" fill="#fff" stroke="#00ff00"/><rect x="368" y="79" width="1" height="14" fill="#00ff00"/><rect x="367.5" y="80.5" width="2" height="8" fill="#000" stroke="#00ff00"/><rect x="372" y="77" width="1" height="8" fill="#00ff00"/><rect x="371" y="79" width="3" height="1" fill="#00ff00"/><rect x="376" y="77" width="1" height="11" fill="#00ff00"/><rect x="375.5" y="80.5" width="2" height="6" fill="#fff" stroke="#00ff00"/><rect x="380" y="85" width="1" height="8" fill="#00ff00"/><rect x="379" y="87" width="3" height="1" fill="#00ff00"/><rect x="384" y="82" width="1" height="13" fill="#00ff00"/><rect x="383.5" y="86.5" width="2" height="3" fill="#000" stroke="#00ff00"/><rect x="388" y="79" width="1" height="10" fill="#00ff00"/><rect x="387.5" y="81.5" width="2" height="5" fill="#000" stroke="#00ff00"/><rect x="392" y="67" width="1" height="16" fill="#00ff00"/><rect x="391.5" y="67.5" width="2" height="15" fill="#000" stroke="#00ff00"/><rect x="396" y="65" width="1" height="13" fill="#00ff00"/><rect x="395" y="66" width="3" height="1" fill="#00ff00"/><rect x="400" y="66" width="1" height="12" fill="#00ff00"/><rect x="399.5" y="66.5" width="2" height="8" fill="#fff" stroke="#00ff00"/><rect x="404" y="74" width="1" height="16" fill="#00ff00"/><rect x="403.5" y="74.5" width="2" height="14" fill="#fff" stroke="#00ff00"/><rect x="408" y="82" width="1" height="9" fill="#00ff00"/><rect x="407" y="88" width="3" height="1" fill="#00ff00"/><rect x="412" y="89" width="1" height="32" fill="#00ff00"/><rect x="411.5" y="89.5" width="2" height="17" fill="#fff" stroke="#00ff00"/><rect x="416" y="102" width="1" height="7" fill="#00ff00"/><rect x="415" y="104" width="3" height="1" fill="#00ff00"/><rect x="420" y="103" width="1" height="17" fill="#00ff00"/><rect x="419.5" y="106.5" width="2" height="2" fill="#fff" stroke="#00ff00"/><rect x="424" y="105" width="1" height="10" fill="#00ff00"/><rect x="423" y="107" width="3" height="1" fill="#00ff00"/><rect x="428" y="99" width="1" height="12" fill="#00ff00"/><rect x="427.5" y="100.5" width="2" height="7" fill="#000" stroke="#00ff00"/><rect x="432" y="99" width="1" height="8" fill="#00ff00"/><rect x="431.5" y="100.5" width="2" height="4" fill="#fff" stroke="#00ff00"/><rect x="3.5" y="4.5" width="549" height="120" fill="none" stroke="#fff"/><path d="M436.0 5h9l-4.5 5z" fill="#8c9aab" shape-rendering="auto"/><rect x="553" y="22" width="3" height="1" fill="#fff"/><rect x="553" y="55" width="3" height="1" fill="#fff"/><rect x="553" y="88" width="3" height="1" fill="#fff"/><rect x="553" y="121" width="3" height="1" fill="#fff"/><rect x="4" y="125" width="1" height="3" fill="#fff"/><rect x="68" y="125" width="1" height="3" fill="#fff"/><rect x="132" y="125" width="1" height="3" fill="#fff"/><rect x="196" y="125" width="1" height="3" fill="#fff"/><rect x="260" y="125" width="1" height="3" fill="#fff"/><rect x="324" y="125" width="1" height="3" fill="#fff"/><rect x="388" y="125" width="1" height="3" fill="#fff"/></svg><div class="t" style="left:558px;top:17.5px;font-size:10px;color:#fff;transform:scaleX(0.9);transform-origin:0 0">130.555</div><div class="t" style="left:558px;top:50.5px;font-size:10px;color:#fff;transform:scaleX(0.9);transform-origin:0 0">130.320</div><div class="t" style="left:558px;top:83.5px;font-size:10px;color:#fff;transform:scaleX(0.9);transform-origin:0 0">130.090</div><div class="t" style="left:558px;top:116.5px;font-size:10px;color:#fff;transform:scaleX(0.9);transform-origin:0 0">129.855</div><div class="a" style="left:555px;top:99px;width:39px;height:11px;background:#fff"></div><div class="t" style="left:558px;top:99.5px;font-size:10px;color:#000;transform:scaleX(0.9);transform-origin:0 0">129.977</div><div class="t" style="left:3px;top:128.5px;font-size:10px;color:#fff;transform:scaleX(0.9);transform-origin:0 0">5 Sep 2017</div><div class="t" style="left:67px;top:128.5px;font-size:10px;color:#fff;transform:scaleX(0.9);transform-origin:0 0">5 Sep 03:25</div><div class="t" style="left:131px;top:128.5px;font-size:10px;color:#fff;transform:scaleX(0.9);transform-origin:0 0">5 Sep 04:45</div><div class="t" style="left:195px;top:128.5px;font-size:10px;color:#fff;transform:scaleX(0.9);transform-origin:0 0">5 Sep 06:05</div><div class="t" style="left:259px;top:128.5px;font-size:10px;color:#fff;transform:scaleX(0.9);transform-origin:0 0">5 Sep 07:25</div><div class="t" style="left:323px;top:128.5px;font-size:10px;color:#fff;transform:scaleX(0.9);transform-origin:0 0">5 Sep 08:45</div><div class="t" style="left:387px;top:128.5px;font-size:10px;color:#fff;transform:scaleX(0.9);transform-origin:0 0">5 Sep 10:05</div><div class="t" style="left:534px;top:9px;font-size:10px;color:#fff;transform:translateX(-100%) scaleX(0.91);transform-origin:100% 0">Volume_Scalping_Ea_fix</div><svg class="a" style="left:535px;top:7px" width="13" height="13"><circle cx="6.5" cy="6.5" r="5.5" fill="none" stroke="#fff"/><rect x="4" y="4" width="2" height="2" fill="#fff"/><rect x="7" y="4" width="2" height="2" fill="#fff"/><path d="M3.5 7.5q3 3 6 0" fill="none" stroke="#fff"/></svg></div><div class="a" style="left:624px;top:312px;width:596px;height:1px;background:#9c9c9c"></div><div class="a" style="left:625px;top:313px;width:595px;height:1px;background:#404040"></div><div class="a" style="left:625px;top:312px;width:1px;height:145px;background:#404040"></div><div class="a" style="left:616px;top:466px;width:614px;height:186px;border:1px solid #4a4a4a;border-radius:5px 5px 0 0;box-shadow:inset 0 1px #4a4a4a,inset 0 2px #eef3f9,inset 1px 0 #eef3f9,inset -1px -1px #eef3f9;background:linear-gradient(#c0cedc 0px,#c6d4e3 10px,#cfdbe9 22px,#d6e2ef 31px,#d8e4f0 100%)"></div><svg class="a" style="left:625px;top:477px" width="16" height="16" shape-rendering="crispEdges"><rect x="2.5" y="0.5" width="11" height="8" fill="#fff" stroke="#3d86f0"/><rect x="5.5" y="6.5" width="11" height="8" fill="#fff" stroke="#3d86f0"/><path d="M4 5l2-2 1 2 2-3 2 2" fill="none" stroke="#3d86f0" shape-rendering="auto"/><path d="M7 10l2 2 1.5-3 2 3 2-2" fill="none" stroke="#3d86f0" shape-rendering="auto"/></svg><div class="t" style="left:646px;top:480px;font-size:12.5px;color:#3b3b3b">USDCAD,M5</div><div class="a" style="left:1123px;top:477px;width:31px;height:17px;border:1px solid #8595b3;border-radius:3px;background:linear-gradient(#d6e0ec,#c8d5e5)"></div><div class="a" style="left:1156px;top:477px;width:31px;height:17px;border:1px solid #8595b3;border-radius:3px;background:linear-gradient(#d6e0ec,#c8d5e5)"></div><div class="a" style="left:1189px;top:477px;width:31px;height:17px;border:1px solid #8595b3;border-radius:3px;background:linear-gradient(#d6e0ec,#c8d5e5)"></div><div class="a" style="left:1133px;top:485px;width:12px;height:5px;background:#f4f4f4;border:1px solid #444;border-radius:2px"></div><div class="a" style="left:1166px;top:481px;width:11px;height:10px;background:#f4f4f4;border:1px solid #444;border-radius:1px"></div><div class="a" style="left:1169px;top:484px;width:5px;height:3px;border:1px solid #444"></div><svg class="a" style="left:1198px;top:480px" width="13" height="12"><path d="M2.5 2.5L10.5 9.5M10.5 2.5L2.5 9.5" stroke="#444" stroke-width="4" stroke-linecap="round"/><path d="M2.5 2.5L10.5 9.5M10.5 2.5L2.5 9.5" stroke="#f4f4f4" stroke-width="2"/></svg><div class="a" style="left:624px;top:496px;width:597px;height:147px;border-top:1px solid #d3dfec;border-left:1px solid #9c9c9c;border-right:1px solid #fff;border-bottom:1px solid #fff;background:#000;background-clip:padding-box;overflow:hidden"><svg class="a" style="left:0;top:0" width="595" height="145" shape-rendering="crispEdges"><rect x="3" y="52" width="549" height="1" fill="#ff0000"/><rect x="3" y="60" width="549" height="1" fill="#778899"/><rect x="6" y="5" width="256" height="99" fill="#008080"/><rect x="11.5" y="4.5" width="250" height="93" fill="none" stroke="#a6d6d6" stroke-width="1"/></svg><svg class="a" style="left:7px;top:10px" width="8" height="6"><path d="M0 0h7l-3.5 5z" fill="#fff"/></svg><div class="t" style="left:19px;top:9.3px;font-size:9.4px;color:#fff;transform:scaleX(0.98);transform-origin:0 0">USDCAD,M5&nbsp; 1.24033 1.24048 1.24022 1.24033</div><div class="t" style="left:20px;top:6px;font-size:13.6px;letter-spacing:0.2px;color:#fff">Leverage: 1000</div><div class="t" style="left:20px;top:25px;font-size:13.6px;letter-spacing:0.2px;color:#fff">VolumeOrderFlow: 1.50</div><div class="t" style="left:20px;top:44px;font-size:13.6px;letter-spacing:0.2px;color:#00f000">Work Demo Version</div><div class="t" style="left:42px;top:63px;font-size:13.6px;letter-spacing:0.2px;color:#1eaae6">Volume Scalping EA</div><div class="t" style="left:42px;top:82px;font-size:13.6px;letter-spacing:0.2px;color:#fff">Support: info@forex-ea.com</div><svg class="a" style="left:0;top:0" width="595" height="145" shape-rendering="crispEdges"><rect x="4" y="26" width="1" height="9" fill="#00ff00"/><rect x="3.5" y="27.5" width="2" height="5" fill="#fff" stroke="#00ff00"/><rect x="8" y="24" width="1" height="5" fill="#00ff00"/><rect x="7.5" y="25.5" width="2" height="2" fill="#000" stroke="#00ff00"/><rect x="12" y="24" width="1" height="4" fill="#00ff00"/><rect x="11" y="25" width="3" height="1" fill="#00ff00"/><rect x="16" y="25" width="1" height="5" fill="#00ff00"/><rect x="15" y="25" width="3" height="1" fill="#00ff00"/><rect x="20" y="24" width="1" height="5" fill="#00ff00"/><rect x="19" y="25" width="3" height="1" fill="#00ff00"/><rect x="24" y="26" width="1" height="7" fill="#00ff00"/><rect x="23" y="27" width="3" height="1" fill="#00ff00"/><rect x="28" y="27" width="1" height="6" fill="#00ff00"/><rect x="27" y="28" width="3" height="1" fill="#00ff00"/><rect x="32" y="24" width="1" height="6" fill="#00ff00"/><rect x="31.5" y="25.5" width="2" height="2" fill="#fff" stroke="#00ff00"/><rect x="36" y="22" width="1" height="8" fill="#00ff00"/><rect x="35.5" y="25.5" width="2" height="3" fill="#000" stroke="#00ff00"/><rect x="40" y="22" width="1" height="5" fill="#00ff00"/><rect x="39" y="24" width="3" height="1" fill="#00ff00"/><rect x="44" y="15" width="1" height="12" fill="#00ff00"/><rect x="43.5" y="17.5" width="2" height="8" fill="#000" stroke="#00ff00"/><rect x="48" y="14" width="1" height="16" fill="#00ff00"/><rect x="47.5" y="15.5" width="2" height="13" fill="#fff" stroke="#00ff00"/><rect x="52" y="28" width="1" height="15" fill="#00ff00"/><rect x="51.5" y="29.5" width="2" height="10" fill="#fff" stroke="#00ff00"/><rect x="56" y="27" width="1" height="17" fill="#00ff00"/><rect x="55.5" y="28.5" width="2" height="11" fill="#000" stroke="#00ff00"/><rect x="60" y="24" width="1" height="5" fill="#00ff00"/><rect x="59" y="26" width="3" height="1" fill="#00ff00"/><rect x="64" y="24" width="1" height="6" fill="#00ff00"/><rect x="63" y="26" width="3" height="1" fill="#00ff00"/><rect x="68" y="24" width="1" height="7" fill="#00ff00"/><rect x="67.5" y="25.5" width="2" height="2" fill="#fff" stroke="#00ff00"/><rect x="72" y="25" width="1" height="11" fill="#00ff00"/><rect x="71.5" y="26.5" width="2" height="8" fill="#fff" stroke="#00ff00"/><rect x="76" y="22" width="1" height="16" fill="#00ff00"/><rect x="75.5" y="23.5" width="2" height="10" fill="#000" stroke="#00ff00"/><rect x="80" y="18" width="1" height="8" fill="#00ff00"/><rect x="79.5" y="19.5" width="2" height="4" fill="#000" stroke="#00ff00"/><rect x="84" y="18" width="1" height="4" fill="#00ff00"/><rect x="83" y="19" width="3" height="1" fill="#00ff00"/><rect x="88" y="20" width="1" height="9" fill="#00ff00"/><rect x="87.5" y="21.5" width="2" height="6" fill="#fff" stroke="#00ff00"/><rect x="92" y="26" width="1" height="20" fill="#00ff00"/><rect x="91.5" y="27.5" width="2" height="17" fill="#fff" stroke="#00ff00"/><rect x="96" y="40" width="1" height="10" fill="#00ff00"/><rect x="95.5" y="43.5" width="2" height="5" fill="#fff" stroke="#00ff00"/><rect x="100" y="44" width="1" height="12" fill="#00ff00"/><rect x="99" y="46" width="3" height="1" fill="#00ff00"/><rect x="104" y="40" width="1" height="11" fill="#00ff00"/><rect x="103.5" y="45.5" width="2" height="4" fill="#000" stroke="#00ff00"/><rect x="108" y="42" width="1" height="9" fill="#00ff00"/><rect x="107.5" y="43.5" width="2" height="6" fill="#000" stroke="#00ff00"/><rect x="112" y="37" width="1" height="7" fill="#00ff00"/><rect x="111.5" y="40.5" width="2" height="2" fill="#fff" stroke="#00ff00"/><rect x="116" y="35" width="1" height="7" fill="#00ff00"/><rect x="115.5" y="36.5" width="2" height="3" fill="#000" stroke="#00ff00"/><rect x="120" y="35" width="1" height="31" fill="#00ff00"/><rect x="119.5" y="35.5" width="2" height="29" fill="#fff" stroke="#00ff00"/><rect x="124" y="51" width="1" height="14" fill="#00ff00"/><rect x="123.5" y="60.5" width="2" height="3" fill="#000" stroke="#00ff00"/><rect x="128" y="57" width="1" height="36" fill="#00ff00"/><rect x="127.5" y="58.5" width="2" height="33" fill="#fff" stroke="#00ff00"/><rect x="132" y="86" width="1" height="20" fill="#00ff00"/><rect x="131.5" y="89.5" width="2" height="7" fill="#fff" stroke="#00ff00"/><rect x="136" y="95" width="1" height="13" fill="#00ff00"/><rect x="135" y="99" width="3" height="1" fill="#00ff00"/><rect x="140" y="94" width="1" height="16" fill="#00ff00"/><rect x="139.5" y="95.5" width="2" height="4" fill="#000" stroke="#00ff00"/><rect x="144" y="85" width="1" height="15" fill="#00ff00"/><rect x="143.5" y="86.5" width="2" height="8" fill="#000" stroke="#00ff00"/><rect x="148" y="86" width="1" height="18" fill="#00ff00"/><rect x="147.5" y="87.5" width="2" height="9" fill="#fff" stroke="#00ff00"/><rect x="152" y="92" width="1" height="7" fill="#00ff00"/><rect x="151" y="96" width="3" height="1" fill="#00ff00"/><rect x="156" y="81" width="1" height="23" fill="#00ff00"/><rect x="155.5" y="82.5" width="2" height="15" fill="#000" stroke="#00ff00"/><rect x="160" y="75" width="1" height="10" fill="#00ff00"/><rect x="159.5" y="77.5" width="2" height="5" fill="#000" stroke="#00ff00"/><rect x="164" y="74" width="1" height="8" fill="#00ff00"/><rect x="163.5" y="75.5" width="2" height="2" fill="#fff" stroke="#00ff00"/><rect x="168" y="55" width="1" height="28" fill="#00ff00"/><rect x="167.5" y="64.5" width="2" height="13" fill="#000" stroke="#00ff00"/><rect x="172" y="58" width="1" height="40" fill="#00ff00"/><rect x="171.5" y="64.5" width="2" height="33" fill="#fff" stroke="#00ff00"/><rect x="176" y="86" width="1" height="17" fill="#00ff00"/><rect x="175.5" y="87.5" width="2" height="8" fill="#000" stroke="#00ff00"/><rect x="180" y="73" width="1" height="15" fill="#00ff00"/><rect x="179.5" y="74.5" width="2" height="11" fill="#000" stroke="#00ff00"/><rect x="184" y="64" width="1" height="14" fill="#00ff00"/><rect x="183.5" y="69.5" width="2" height="5" fill="#000" stroke="#00ff00"/><rect x="188" y="64" width="1" height="9" fill="#00ff00"/><rect x="187.5" y="65.5" width="2" height="4" fill="#000" stroke="#00ff00"/><rect x="192" y="57" width="1" height="25" fill="#00ff00"/><rect x="191.5" y="65.5" width="2" height="15" fill="#fff" stroke="#00ff00"/><rect x="196" y="69" width="1" height="13" fill="#00ff00"/><rect x="195.5" y="71.5" width="2" height="9" fill="#000" stroke="#00ff00"/><rect x="200" y="71" width="1" height="10" fill="#00ff00"/><rect x="199.5" y="71.5" width="2" height="8" fill="#fff" stroke="#00ff00"/><rect x="204" y="77" width="1" height="10" fill="#00ff00"/><rect x="203.5" y="79.5" width="2" height="2" fill="#fff" stroke="#00ff00"/><rect x="208" y="75" width="1" height="12" fill="#00ff00"/><rect x="207.5" y="81.5" width="2" height="4" fill="#000" stroke="#00ff00"/><rect x="212" y="72" width="1" height="14" fill="#00ff00"/><rect x="211.5" y="79.5" width="2" height="5" fill="#000" stroke="#00ff00"/><rect x="216" y="66" width="1" height="15" fill="#00ff00"/><rect x="215.5" y="72.5" width="2" height="7" fill="#000" stroke="#00ff00"/><rect x="220" y="72" width="1" height="8" fill="#00ff00"/><rect x="219.5" y="72.5" width="2" height="7" fill="#fff" stroke="#00ff00"/><rect x="224" y="71" width="1" height="9" fill="#00ff00"/><rect x="223.5" y="75.5" width="2" height="3" fill="#fff" stroke="#00ff00"/><rect x="228" y="74" width="1" height="10" fill="#00ff00"/><rect x="227.5" y="75.5" width="2" height="4" fill="#fff" stroke="#00ff00"/><rect x="232" y="77" width="1" height="11" fill="#00ff00"/><rect x="231" y="79" width="3" height="1" fill="#00ff00"/><rect x="236" y="79" width="1" height="7" fill="#00ff00"/><rect x="235.5" y="79.5" width="2" height="5" fill="#fff" stroke="#00ff00"/><rect x="240" y="81" width="1" height="6" fill="#00ff00"/><rect x="239" y="82" width="3" height="1" fill="#00ff00"/><rect x="244" y="81" width="1" height="12" fill="#00ff00"/><rect x="243.5" y="82.5" width="2" height="9" fill="#fff" stroke="#00ff00"/><rect x="248" y="88" width="1" height="8" fill="#00ff00"/><rect x="247.5" y="91.5" width="2" height="3" fill="#fff" stroke="#00ff00"/><rect x="252" y="87" width="1" height="12" fill="#00ff00"/><rect x="251.5" y="87.5" width="2" height="7" fill="#000" stroke="#00ff00"/><rect x="256" y="87" width="1" height="20" fill="#00ff00"/><rect x="255.5" y="88.5" width="2" height="11" fill="#fff" stroke="#00ff00"/><rect x="260" y="97" width="1" height="9" fill="#00ff00"/><rect x="259.5" y="99.5" width="2" height="2" fill="#fff" stroke="#00ff00"/><rect x="264" y="74" width="1" height="35" fill="#00ff00"/><rect x="263.5" y="87.5" width="2" height="14" fill="#000" stroke="#00ff00"/><rect x="268" y="81" width="1" height="27" fill="#00ff00"/><rect x="267.5" y="86.5" width="2" height="9" fill="#fff" stroke="#00ff00"/><rect x="272" y="94" width="1" height="19" fill="#00ff00"/><rect x="271.5" y="95.5" width="2" height="12" fill="#fff" stroke="#00ff00"/><rect x="276" y="102" width="1" height="12" fill="#00ff00"/><rect x="275.5" y="102.5" width="2" height="6" fill="#000" stroke="#00ff00"/><rect x="280" y="93" width="1" height="11" fill="#00ff00"/><rect x="279.5" y="94.5" width="2" height="8" fill="#000" stroke="#00ff00"/><rect x="284" y="77" width="1" height="19" fill="#00ff00"/><rect x="283.5" y="78.5" width="2" height="16" fill="#000" stroke="#00ff00"/><rect x="288" y="77" width="1" height="11" fill="#00ff00"/><rect x="287.5" y="77.5" width="2" height="10" fill="#fff" stroke="#00ff00"/><rect x="292" y="86" width="1" height="12" fill="#00ff00"/><rect x="291.5" y="87.5" width="2" height="7" fill="#fff" stroke="#00ff00"/><rect x="296" y="84" width="1" height="12" fill="#00ff00"/><rect x="295.5" y="91.5" width="2" height="4" fill="#000" stroke="#00ff00"/><rect x="300" y="74" width="1" height="18" fill="#00ff00"/><rect x="299.5" y="77.5" width="2" height="14" fill="#000" stroke="#00ff00"/><rect x="304" y="69" width="1" height="14" fill="#00ff00"/><rect x="303.5" y="77.5" width="2" height="2" fill="#fff" stroke="#00ff00"/><rect x="308" y="71" width="1" height="12" fill="#00ff00"/><rect x="307.5" y="72.5" width="2" height="6" fill="#000" stroke="#00ff00"/><rect x="312" y="69" width="1" height="14" fill="#00ff00"/><rect x="311" y="74" width="3" height="1" fill="#00ff00"/><rect x="316" y="69" width="1" height="9" fill="#00ff00"/><rect x="315.5" y="73.5" width="2" height="2" fill="#fff" stroke="#00ff00"/><rect x="320" y="71" width="1" height="17" fill="#00ff00"/><rect x="319.5" y="71.5" width="2" height="14" fill="#fff" stroke="#00ff00"/><rect x="324" y="80" width="1" height="8" fill="#00ff00"/><rect x="323.5" y="81.5" width="2" height="5" fill="#000" stroke="#00ff00"/><rect x="328" y="79" width="1" height="14" fill="#00ff00"/><rect x="327.5" y="81.5" width="2" height="10" fill="#fff" stroke="#00ff00"/><rect x="332" y="89" width="1" height="13" fill="#00ff00"/><rect x="331.5" y="89.5" width="2" height="6" fill="#fff" stroke="#00ff00"/><rect x="336" y="94" width="1" height="24" fill="#00ff00"/><rect x="335.5" y="95.5" width="2" height="14" fill="#fff" stroke="#00ff00"/><rect x="340" y="92" width="1" height="20" fill="#00ff00"/><rect x="339.5" y="99.5" width="2" height="11" fill="#000" stroke="#00ff00"/><rect x="344" y="84" width="1" height="18" fill="#00ff00"/><rect x="343.5" y="85.5" width="2" height="15" fill="#000" stroke="#00ff00"/><rect x="348" y="76" width="1" height="20" fill="#00ff00"/><rect x="347.5" y="81.5" width="2" height="6" fill="#000" stroke="#00ff00"/><rect x="352" y="81" width="1" height="23" fill="#00ff00"/><rect x="351.5" y="82.5" width="2" height="10" fill="#fff" stroke="#00ff00"/><rect x="356" y="81" width="1" height="15" fill="#00ff00"/><rect x="355.5" y="82.5" width="2" height="9" fill="#000" stroke="#00ff00"/><rect x="360" y="79" width="1" height="12" fill="#00ff00"/><rect x="359" y="81" width="3" height="1" fill="#00ff00"/><rect x="364" y="77" width="1" height="13" fill="#00ff00"/><rect x="363" y="83" width="3" height="1" fill="#00ff00"/><rect x="368" y="75" width="1" height="18" fill="#00ff00"/><rect x="367" y="84" width="3" height="1" fill="#00ff00"/><rect x="372" y="84" width="1" height="17" fill="#00ff00"/><rect x="371.5" y="85.5" width="2" height="7" fill="#fff" stroke="#00ff00"/><rect x="376" y="92" width="1" height="21" fill="#00ff00"/><rect x="375.5" y="93.5" width="2" height="12" fill="#fff" stroke="#00ff00"/><rect x="380" y="96" width="1" height="20" fill="#00ff00"/><rect x="379.5" y="105.5" width="2" height="9" fill="#fff" stroke="#00ff00"/><rect x="384" y="108" width="1" height="13" fill="#00ff00"/><rect x="383.5" y="109.5" width="2" height="5" fill="#000" stroke="#00ff00"/><rect x="388" y="102" width="1" height="14" fill="#00ff00"/><rect x="387.5" y="104.5" width="2" height="6" fill="#000" stroke="#00ff00"/><rect x="392" y="89" width="1" height="19" fill="#00ff00"/><rect x="391.5" y="99.5" width="2" height="5" fill="#000" stroke="#00ff00"/><rect x="396" y="89" width="1" height="13" fill="#00ff00"/><rect x="395.5" y="92.5" width="2" height="7" fill="#000" stroke="#00ff00"/><rect x="400" y="81" width="1" height="17" fill="#00ff00"/><rect x="399.5" y="87.5" width="2" height="6" fill="#000" stroke="#00ff00"/><rect x="404" y="79" width="1" height="14" fill="#00ff00"/><rect x="403.5" y="81.5" width="2" height="7" fill="#000" stroke="#00ff00"/><rect x="408" y="81" width="1" height="12" fill="#00ff00"/><rect x="407" y="83" width="3" height="1" fill="#00ff00"/><rect x="412" y="71" width="1" height="19" fill="#00ff00"/><rect x="411.5" y="77.5" width="2" height="7" fill="#000" stroke="#00ff00"/><rect x="416" y="62" width="1" height="17" fill="#00ff00"/><rect x="415.5" y="63.5" width="2" height="14" fill="#000" stroke="#00ff00"/><rect x="420" y="43" width="1" height="23" fill="#00ff00"/><rect x="419.5" y="49.5" width="2" height="16" fill="#000" stroke="#00ff00"/><rect x="424" y="39" width="1" height="26" fill="#00ff00"/><rect x="423.5" y="49.5" width="2" height="7" fill="#fff" stroke="#00ff00"/><rect x="428" y="48" width="1" height="15" fill="#00ff00"/><rect x="427.5" y="56.5" width="2" height="6" fill="#fff" stroke="#00ff00"/><rect x="432" y="54" width="1" height="11" fill="#00ff00"/><rect x="431" y="61" width="3" height="1" fill="#00ff00"/><rect x="3.5" y="4.5" width="549" height="120" fill="none" stroke="#fff"/><path d="M436.0 5h9l-4.5 5z" fill="#8c9aab" shape-rendering="auto"/><rect x="553" y="20" width="3" height="1" fill="#fff"/><rect x="553" y="52" width="3" height="1" fill="#fff"/><rect x="553" y="87" width="3" height="1" fill="#fff"/><rect x="553" y="120" width="3" height="1" fill="#fff"/><rect x="4" y="125" width="1" height="3" fill="#fff"/><rect x="68" y="125" width="1" height="3" fill="#fff"/><rect x="132" y="125" width="1" height="3" fill="#fff"/><rect x="196" y="125" width="1" height="3" fill="#fff"/><rect x="260" y="125" width="1" height="3" fill="#fff"/><rect x="324" y="125" width="1" height="3" fill="#fff"/><rect x="388" y="125" width="1" height="3" fill="#fff"/></svg><div class="t" style="left:558px;top:15.5px;font-size:10px;color:#fff;transform:scaleX(0.9);transform-origin:0 0">1.24140</div><div class="t" style="left:558px;top:47.5px;font-size:10px;color:#fff;transform:scaleX(0.9);transform-origin:0 0">1.24055</div><div class="t" style="left:558px;top:82.5px;font-size:10px;color:#fff;transform:scaleX(0.9);transform-origin:0 0">1.23960</div><div class="t" style="left:558px;top:115.5px;font-size:10px;color:#fff;transform:scaleX(0.9);transform-origin:0 0">1.23870</div><div class="a" style="left:555px;top:47px;width:39px;height:11px;background:#ff0000"></div><div class="t" style="left:558px;top:47.5px;font-size:10px;color:#000;transform:scaleX(0.9);transform-origin:0 0">1.24055</div><div class="a" style="left:555px;top:55px;width:39px;height:11px;background:#fff"></div><div class="t" style="left:558px;top:55.5px;font-size:10px;color:#000;transform:scaleX(0.9);transform-origin:0 0">1.24033</div><div class="t" style="left:3px;top:128.5px;font-size:10px;color:#fff;transform:scaleX(0.9);transform-origin:0 0">5 Sep 2017</div><div class="t" style="left:67px;top:128.5px;font-size:10px;color:#fff;transform:scaleX(0.9);transform-origin:0 0">5 Sep 03:25</div><div class="t" style="left:131px;top:128.5px;font-size:10px;color:#fff;transform:scaleX(0.9);transform-origin:0 0">5 Sep 04:45</div><div class="t" style="left:195px;top:128.5px;font-size:10px;color:#fff;transform:scaleX(0.9);transform-origin:0 0">5 Sep 06:05</div><div class="t" style="left:259px;top:128.5px;font-size:10px;color:#fff;transform:scaleX(0.9);transform-origin:0 0">5 Sep 07:25</div><div class="t" style="left:323px;top:128.5px;font-size:10px;color:#fff;transform:scaleX(0.9);transform-origin:0 0">5 Sep 08:45</div><div class="t" style="left:387px;top:128.5px;font-size:10px;color:#fff;transform:scaleX(0.9);transform-origin:0 0">5 Sep 10:05</div><div class="t" style="left:534px;top:9px;font-size:10px;color:#fff;transform:translateX(-100%) scaleX(0.91);transform-origin:100% 0">Volume_Scalping_Ea_fix</div><svg class="a" style="left:535px;top:7px" width="13" height="13"><circle cx="6.5" cy="6.5" r="5.5" fill="none" stroke="#fff"/><rect x="4" y="4" width="2" height="2" fill="#fff"/><rect x="7" y="4" width="2" height="2" fill="#fff"/><path d="M3.5 7.5q3 3 6 0" fill="none" stroke="#fff"/></svg></div><div class="a" style="left:624px;top:497px;width:596px;height:1px;background:#9c9c9c"></div><div class="a" style="left:625px;top:498px;width:595px;height:1px;background:#404040"></div><div class="a" style="left:625px;top:497px;width:1px;height:145px;background:#404040"></div><svg class="a" style="left:0;top:0" width="1275" height="96"><rect x="2" y="46" width="4" height="1" fill="#9a9a9a"/><rect x="2" y="48" width="4" height="1" fill="#9a9a9a"/><rect x="2" y="50" width="4" height="1" fill="#9a9a9a"/><rect x="2" y="52" width="4" height="1" fill="#9a9a9a"/><rect x="2" y="54" width="4" height="1" fill="#9a9a9a"/><rect x="2" y="56" width="4" height="1" fill="#9a9a9a"/><rect x="2" y="58" width="4" height="1" fill="#9a9a9a"/><rect x="2" y="60" width="4" height="1" fill="#9a9a9a"/><rect x="2" y="62" width="4" height="1" fill="#9a9a9a"/><rect x="2" y="64" width="4" height="1" fill="#9a9a9a"/><rect x="11.5" y="48.5" width="13" height="10" fill="#eaf2fb" stroke="#3a78c8"/><rect x="12" y="49" width="12" height="2" fill="#3a78c8"/><path d="M14 52v5" stroke="#6a8ab0"/><path d="M20 51h4v4h4v4h-4v4h-4v-4h-4v-4h4z" fill="#2ecc2e" stroke="#0e8a0e"/><path d="M33 55h6l-3 3z" fill="#000"/><rect x="51.5" y="53.5" width="13" height="10" fill="#eaf2fb" stroke="#3a78c8"/><rect x="48.5" y="48.5" width="13" height="10" fill="#eaf2fb" stroke="#3a78c8"/><rect x="49" y="49" width="12" height="2" fill="#3a78c8"/><path d="M50 55h9M54 61h9" stroke="#6a8ab0"/><path d="M70 55h6l-3 3z" fill="#000"/><rect x="83" y="45" width="1" height="21" fill="#a0a0a0"/><rect x="92.5" y="48.5" width="15" height="15" rx="2" fill="#fff" stroke="#4a90e2" stroke-width="1.4"/><path d="M95 57.5h10M95 60.5h10" stroke="#e8e8e8"/><path d="M97.5 50.5l3.5 3.5h-2v3h-3v-3h-2z" fill="#22aa22" stroke="#118811" stroke-width=".6"/><path d="M102.5 61.5l3.5-3.5h-2v-3h-3v3h-2z" fill="#f05a28" stroke="#c84010" stroke-width=".6"/><circle cx="128.5" cy="56.5" r="6.5" fill="none" stroke="#5a5a5a" stroke-width="1.3"/><path d="M128.5 48.5v6.5M128.5 58v6.5M120.5 56.5h6.5M130 56.5h6.5" stroke="#5a5a5a" stroke-width="1.3"/><path d="M147.5 50.5h4l1 1.5h5v7h-10z" fill="#f7de7a" stroke="#c99a20"/><path d="M159 53.5l1.8 3.8 4.1.5-3 2.8.8 4.1-3.7-2-3.7 2 .8-4.1-3-2.8 4.1-.5z" fill="#f6d24a" stroke="#b8860b" stroke-width=".9"/><path d="M151.5 59v6" stroke="#333" stroke-dasharray="1 1"/><rect x="172" y="44" width="25" height="22" fill="#f8f8f8"/><rect x="172" y="44" width="25" height="1" fill="#8f8f8f"/><rect x="172" y="44" width="1" height="22" fill="#8f8f8f"/><rect x="196" y="44" width="1" height="22" fill="#fff"/><rect x="172" y="65" width="25" height="1" fill="#fff"/><rect x="176.5" y="49.5" width="15" height="13" rx="1.5" fill="#fff" stroke="#3a80d8" stroke-width="1.4"/><rect x="177" y="50" width="2.5" height="12" fill="#3a80d8"/><rect x="178" y="57" width="1" height="4" fill="#333"/><path d="M182 52.5h9M182 54.5h9M182 56.5h9M182 58.5h9" stroke="#a9c8ee" stroke-width=".8"/><rect x="180" y="51" width="1" height="1" fill="#333"/><rect x="181" y="52" width="1" height="1" fill="#e00"/><rect x="181" y="54" width="1" height="1" fill="#222"/><rect x="181" y="56" width="1" height="1" fill="#222"/><rect x="181" y="58" width="1" height="1" fill="#e00"/><rect x="204.5" y="48.5" width="12" height="13" fill="#f6f3ee" stroke="#a49a88"/><path d="M207 50v8M207 51h8M213 50v4" stroke="#777" stroke-width=".8"/><circle cx="212" cy="56.5" r="4.6" fill="rgba(200,225,250,.8)" stroke="#5a9ae0" stroke-width="1.3"/><path d="M215.5 60l5 5" stroke="#c89a20" stroke-width="2.6"/><rect x="229" y="45" width="1" height="21" fill="#a0a0a0"/><path d="M239.5 48.5h8l3 3v11h-11z" fill="#fbfbfb" stroke="#6a6a6a"/><path d="M247.5 48.5v3h3" fill="#ddd" stroke="#6a6a6a"/><rect x="241" y="50.5" width="3" height="1.5" fill="#888"/><path d="M241 54.5h6M241 56.5h5M241 58.5h4" stroke="#888"/><path d="M247 53h4v4h4v4h-4v4h-4v-4h-4v-4h4z" fill="#32cd32" stroke="#139013"/><path d="M344 57l7-7 9 6-7 7z" fill="#e6b422" stroke="#9a6a10"/><path d="M345 58.5l8 5.5 7-6.5" fill="none" stroke="#b07a18" stroke-width="1.2"/><path d="M348 56l4-4 5 3.5" fill="none" stroke="#f6e08a"/><rect x="368" y="44" width="111" height="22" fill="#f8f8f8"/><rect x="368" y="44" width="111" height="1" fill="#8f8f8f"/><rect x="368" y="44" width="1" height="22" fill="#8f8f8f"/><rect x="478" y="44" width="1" height="22" fill="#fff"/><rect x="368" y="65" width="111" height="1" fill="#fff"/><path d="M373 55l3 7h9l3-7z" fill="#f0cc50" stroke="#b08a20"/><ellipse cx="380" cy="52" rx="7.5" ry="3.3" fill="#6ab4e8" stroke="#3a84c0"/><ellipse cx="380" cy="50.5" rx="4" ry="2.2" fill="#8ccaf2"/><circle cx="385" cy="60.5" r="4.2" fill="#1a9a2a" stroke="#0a6a1a" stroke-width=".6"/><path d="M383.5 58.3v4.4l3.6-2.2z" fill="#fff"/><rect x="483" y="46" width="4" height="1" fill="#9a9a9a"/><rect x="483" y="48" width="4" height="1" fill="#9a9a9a"/><rect x="483" y="50" width="4" height="1" fill="#9a9a9a"/><rect x="483" y="52" width="4" height="1" fill="#9a9a9a"/><rect x="483" y="54" width="4" height="1" fill="#9a9a9a"/><rect x="483" y="56" width="4" height="1" fill="#9a9a9a"/><rect x="483" y="58" width="4" height="1" fill="#9a9a9a"/><rect x="483" y="60" width="4" height="1" fill="#9a9a9a"/><rect x="483" y="62" width="4" height="1" fill="#9a9a9a"/><rect x="483" y="64" width="4" height="1" fill="#9a9a9a"/><rect x="478" y="43" width="1" height="25" fill="#a0a0a0"/><path d="M497.5 49v15M495 62.5h15" stroke="#555" stroke-width="1.3"/><path d="M497.5 48l-2 3h4z M511 62.5l-3-2v4z" fill="#555"/><path d="M501.5 60v-8M500 58.5h1.5M501.5 52.5h2.5" stroke="#1a9a2a" stroke-width="1.3"/><rect x="518" y="44" width="25" height="22" fill="#f8f8f8"/><rect x="518" y="44" width="25" height="1" fill="#8f8f8f"/><rect x="518" y="44" width="1" height="22" fill="#8f8f8f"/><rect x="542" y="44" width="1" height="22" fill="#fff"/><rect x="518" y="65" width="25" height="1" fill="#fff"/><path d="M524.5 49v15M522 62.5h15" stroke="#555" stroke-width="1.3"/><path d="M524.5 48l-2 3h4z M538 62.5l-3-2v4z" fill="#555"/><rect x="528.5" y="50.5" width="4" height="7" fill="#3ad04a" stroke="#0a8a2a"/><path d="M530.5 48v2.5M530.5 57.5v2.5" stroke="#0a8a2a"/><path d="M552.5 49v15M550 62.5h15" stroke="#555" stroke-width="1.3"/><path d="M552.5 48l-2 3h4z M566 62.5l-3-2v4z" fill="#555"/><path d="M555 59.5l4-6 2-1 6 5" fill="none" stroke="#1a9a2a" stroke-width="1.2"/><rect x="575" y="45" width="1" height="21" fill="#a0a0a0"/><circle cx="590" cy="54" r="5.5" fill="#d8ecfb" stroke="#3a80d0" stroke-width="1.6"/><path d="M587 54h6M590 51v6" stroke="#3a80d0" stroke-width="1.8"/><path d="M594.5 58.5l4 4" stroke="#c8a020" stroke-width="2.8"/><circle cx="618" cy="54" r="5.5" fill="#d8ecfb" stroke="#3a80d0" stroke-width="1.6"/><path d="M615 54h6" stroke="#3a80d0" stroke-width="1.8"/><path d="M622.5 58.5l4 4" stroke="#c8a020" stroke-width="2.8"/><rect x="640" y="48" width="8" height="8" fill="#3aa03a"/><rect x="648" y="48" width="8" height="8" fill="#2a62d0"/><rect x="640" y="56" width="8" height="8" fill="#2a62d0"/><rect x="648" y="56" width="8" height="8" fill="#3aa03a"/><path d="M641.5 53h5M649.5 53h5M641.5 61h5M649.5 61h5" stroke="#fff" stroke-width="2.2"/><rect x="665" y="45" width="1" height="21" fill="#a0a0a0"/><rect x="670" y="44" width="25" height="22" fill="#f8f8f8"/><rect x="670" y="44" width="25" height="1" fill="#8f8f8f"/><rect x="670" y="44" width="1" height="22" fill="#8f8f8f"/><rect x="694" y="44" width="1" height="22" fill="#fff"/><rect x="670" y="65" width="25" height="1" fill="#fff"/><path d="M677.5 49v15M675 62.5h15" stroke="#555" stroke-width="1.3"/><path d="M677.5 48l-2 3h4z M691 62.5l-3-2v4z" fill="#555"/><path d="M683 51.5v7l4.5-3.5z" fill="#22bb22" stroke="#118811" stroke-width=".6"/><rect x="698" y="44" width="25" height="22" fill="#f8f8f8"/><rect x="698" y="44" width="25" height="1" fill="#8f8f8f"/><rect x="698" y="44" width="1" height="22" fill="#8f8f8f"/><rect x="722" y="44" width="1" height="22" fill="#fff"/><rect x="698" y="65" width="25" height="1" fill="#fff"/><path d="M705.5 49v15M703 62.5h15" stroke="#555" stroke-width="1.3"/><path d="M705.5 48l-2 3h4z M719 62.5l-3-2v4z" fill="#555"/><path d="M711 50v10" stroke="#2a6aa0" stroke-width="1.4"/><path d="M712.5 55l3.5-2.5v5z" fill="#d04010"/><path d="M714 55h4" stroke="#d04010" stroke-width="1.3"/><rect x="727" y="45" width="1" height="21" fill="#a0a0a0"/><path d="M737.5 48.5h8l3 3v11h-11z" fill="#fbfbfb" stroke="#6a6a6a"/><path d="M741 59v-6q0-2 2-2M740 54h3" fill="none" stroke="#555"/><path d="M743 53h4v4h4v4h-4v4h-4v-4h-4v-4h4z" fill="#32cd32" stroke="#139013"/><path d="M757 55h6l-3 3z" fill="#000"/><circle cx="781" cy="56" r="7" fill="#f4f8fc" stroke="#1a5ac0" stroke-width="2.2"/><path d="M781 51.5v4.5h3" fill="none" stroke="#333" stroke-width="1.2"/><path d="M794 55h6l-3 3z" fill="#000"/><rect x="810.5" y="49.5" width="15" height="13" fill="#fff" stroke="#3a78c8"/><rect x="811" y="50" width="14" height="2" fill="#5a90d8"/><path d="M812 56.5l3-1 3 1 3-1.5 3 .5" fill="none" stroke="#b03020"/><path d="M812 60.5l3-1 3 1 3-2 3 1" fill="none" stroke="#2a9a2a"/><path d="M811 58h14" stroke="#9fc0e8"/><path d="M831 55h6l-3 3z" fill="#000"/><rect x="842" y="43" width="1" height="26" fill="#a0a0a0"/><circle cx="1235" cy="53" r="4" fill="none" stroke="#2a6ad0" stroke-width="1.8"/><path d="M1232 56l-4 4" stroke="#2a6ad0" stroke-width="2.2"/><ellipse cx="1267" cy="51" rx="5.5" ry="4" fill="#fafafa" stroke="#999"/><ellipse cx="1258" cy="56" rx="5.5" ry="4" fill="#fafafa" stroke="#999"/><path d="M1255 59l-1 3 3-2" fill="#fafafa" stroke="#999"/><rect x="2" y="72" width="4" height="1" fill="#9a9a9a"/><rect x="2" y="74" width="4" height="1" fill="#9a9a9a"/><rect x="2" y="76" width="4" height="1" fill="#9a9a9a"/><rect x="2" y="78" width="4" height="1" fill="#9a9a9a"/><rect x="2" y="80" width="4" height="1" fill="#9a9a9a"/><rect x="2" y="82" width="4" height="1" fill="#9a9a9a"/><rect x="2" y="84" width="4" height="1" fill="#9a9a9a"/><rect x="2" y="86" width="4" height="1" fill="#9a9a9a"/><rect x="2" y="88" width="4" height="1" fill="#9a9a9a"/><rect x="2" y="90" width="4" height="1" fill="#9a9a9a"/><rect x="8" y="71" width="25" height="22" fill="#f8f8f8"/><rect x="8" y="71" width="25" height="1" fill="#8f8f8f"/><rect x="8" y="71" width="1" height="22" fill="#8f8f8f"/><rect x="32" y="71" width="1" height="22" fill="#fff"/><rect x="8" y="92" width="25" height="1" fill="#fff"/><path d="M16 75v12l3-3 2.5 5 2-1-2.5-5h4z" fill="#444"/><path d="M48.5 76v6M48.5 85v6M41 83.5h6M50 83.5h6" stroke="#444" stroke-width="1.3"/><rect x="65" y="72" width="1" height="21" fill="#a0a0a0"/><rect x="82" y="77" width="1.4" height="13" fill="#444"/><rect x="105" y="83" width="12" height="1.4" fill="#444"/><path d="M132.5 90.5l13-12" stroke="#444" stroke-width="1.2"/><path d="M159 86l13-10M160 89l13-10M162 92l13-10" stroke="#444" stroke-width="1.1"/><path d="M163.5 79v8M167.5 77v8M171.5 75v8" stroke="#444" stroke-width="1.1"/><path d="M171 86.5h4M171 86.5v6h4M171 89.5h3" fill="none" stroke="#444" stroke-width="1.2"/><path d="M188 76.5h13M188 79.5h13M188 82.5h13M188 86.5h13M188 89.5h10" stroke="#444" stroke-dasharray="1 1"/><path d="M199 93v-6h4M199 90h3" fill="none" stroke="#444" stroke-width="1.3"/><path d="M219 88.5l3.6-9.5h1.2l3.6 9.5M220.5 85.5h5.5" fill="none" stroke="#555" stroke-width="1.7"/><rect x="244.5" y="76.5" width="12" height="13" fill="none" stroke="#555" stroke-dasharray="1 1"/><rect x="244" y="76" width="2" height="2" fill="#444"/><path d="M247 79.5h7M250.5 79.5v8" stroke="#444" stroke-width="1.8"/><path d="M271 79.5l3.5-3 3.5 3-3.5 2z M280 87l3.5-2.5 3.5 2.5-3.5 3z" fill="#444"/><path d="M275 83.5l2 2 4-5" fill="none" stroke="#444" stroke-width="1.4"/><path d="M291 83h6l-3 3z" fill="#000"/><rect x="302" y="70" width="1" height="24" fill="#a0a0a0"/><rect x="306" y="72" width="4" height="1" fill="#9a9a9a"/><rect x="306" y="74" width="4" height="1" fill="#9a9a9a"/><rect x="306" y="76" width="4" height="1" fill="#9a9a9a"/><rect x="306" y="78" width="4" height="1" fill="#9a9a9a"/><rect x="306" y="80" width="4" height="1" fill="#9a9a9a"/><rect x="306" y="82" width="4" height="1" fill="#9a9a9a"/><rect x="306" y="84" width="4" height="1" fill="#9a9a9a"/><rect x="306" y="86" width="4" height="1" fill="#9a9a9a"/><rect x="306" y="88" width="4" height="1" fill="#9a9a9a"/><rect x="306" y="90" width="4" height="1" fill="#9a9a9a"/><rect x="340" y="71" width="25" height="22" fill="#f8f8f8"/><rect x="340" y="71" width="25" height="1" fill="#8f8f8f"/><rect x="340" y="71" width="1" height="22" fill="#8f8f8f"/><rect x="364" y="71" width="1" height="22" fill="#fff"/><rect x="340" y="92" width="25" height="1" fill="#fff"/><rect x="563" y="70" width="1" height="25" fill="#a0a0a0"/></svg><div class="t" style="left:317px;top:78px;font-size:10.5px;color:#444">M1</div><div class="t" style="left:345px;top:78px;font-size:10.5px;color:#444">M5</div><div class="t" style="left:372px;top:78px;font-size:10.5px;color:#444">M15</div><div class="t" style="left:400px;top:78px;font-size:10.5px;color:#444">M30</div><div class="t" style="left:431px;top:78px;font-size:10.5px;color:#444">H1</div><div class="t" style="left:457px;top:78px;font-size:10.5px;color:#444">H4</div><div class="t" style="left:486px;top:78px;font-size:10.5px;color:#444">D1</div><div class="t" style="left:513px;top:78px;font-size:10.5px;color:#444">W1</div><div class="t" style="left:540px;top:78px;font-size:10.5px;color:#444">MN</div><div class="t" style="left:258px;top:49px;font-size:12px;color:#000">Новый ордер</div><div class="t" style="left:392px;top:49px;font-size:12px;color:#000">Авто-торговля</div><div class="a" style="left:0;top:742px;width:1275px;height:1px;background:#111"></div><div class="a" style="left:0;top:743px;width:1275px;height:22px;background:#f0f0f0"></div><div class="a" style="left:0;top:763px;width:1275px;height:196px;background:#f0f0f0"></div><div class="a" style="left:0;top:762px;width:1275px;height:1px;background:#fafafa"></div><div class="a" style="left:0;top:743px;width:2px;height:19px;background:#6a6a6a"></div><div class="t" style="left:16px;top:746px;font-size:11.5px;color:#6d6d6d;transform:scaleX(0.92);transform-origin:0 0">EURUSD,M5</div><div class="t" style="left:103px;top:746px;font-size:11.5px;color:#6d6d6d;transform:scaleX(0.92);transform-origin:0 0">GBPUSD,M5</div><div class="t" style="left:190px;top:746px;font-size:11.5px;color:#6d6d6d;transform:scaleX(0.92);transform-origin:0 0">USDJPY,M5</div><div class="t" style="left:272px;top:746px;font-size:11.5px;color:#6d6d6d;transform:scaleX(0.92);transform-origin:0 0">EURJPY,M5</div><div class="a" style="left:91px;top:745px;width:1px;height:13px;background:#8a8a8a"></div><div class="a" style="left:178px;top:745px;width:1px;height:13px;background:#8a8a8a"></div><div class="a" style="left:263px;top:745px;width:1px;height:13px;background:#8a8a8a"></div><div class="a" style="left:342px;top:743px;width:88px;height:19px;background:#fff;border:1px solid #000;border-top:none"></div><div class="t" style="left:353px;top:746px;font-size:11.5px;color:#000;transform:scaleX(0.92);transform-origin:0 0">USDCAD,M5</div><svg class="a" style="left:1245px;top:746px" width="30" height="10"><path d="M6 1v8l-4-4z" fill="#9a9a9a"/><path d="M22 1v8l4-4z" fill="#9a9a9a"/></svg><div class="t" style="left:3.5px;top:766px;font-size:12px;font-weight:bold;color:#000">×</div><div class="a" style="left:1px;top:780px;width:13px;height:176px;background:#b9c9da"></div><div class="t" style="left:2px;top:955px;font-size:11.5px;color:#4a5868;transform:rotate(-90deg);transform-origin:0 0">Терминал</div><div class="a" style="left:15px;top:766px;width:1260px;height:168px;background:#fff;border-left:1px solid #a0a0a0;border-top:1px solid #a0a0a0"></div><div class="a" style="left:16px;top:767px;width:1259px;height:23px;background:linear-gradient(#ffffff 0,#ffffff 45%,#f3f4f6 50%,#f1f2f4 100%);border-bottom:1px solid #d5d5d5"></div><div class="a" style="left:140px;top:768px;width:1px;height:21px;background:#e2e3e6"></div><div class="a" style="left:312px;top:768px;width:1px;height:21px;background:#e2e3e6"></div><div class="a" style="left:400px;top:768px;width:1px;height:21px;background:#e2e3e6"></div><div class="a" style="left:467px;top:768px;width:1px;height:21px;background:#e2e3e6"></div><div class="a" style="left:553px;top:768px;width:1px;height:21px;background:#e2e3e6"></div><div class="a" style="left:648px;top:768px;width:1px;height:21px;background:#e2e3e6"></div><div class="a" style="left:745px;top:768px;width:1px;height:21px;background:#e2e3e6"></div><div class="a" style="left:841px;top:768px;width:1px;height:21px;background:#e2e3e6"></div><div class="a" style="left:937px;top:768px;width:1px;height:21px;background:#e2e3e6"></div><div class="a" style="left:1032px;top:768px;width:1px;height:21px;background:#e2e3e6"></div><div class="a" style="left:1129px;top:768px;width:1px;height:21px;background:#e2e3e6"></div><div class="t" style="left:22px;top:773px;font-size:12px;color:#000">Ордер</div><div class="t" style="left:69px;top:774px;font-size:10px;color:#999">/</div><div class="t" style="left:307px;top:773px;font-size:12px;color:#000;transform:translateX(-100%)">Время</div><div class="t" style="left:393px;top:773px;font-size:12px;color:#000;transform:translateX(-100%)">Тип</div><div class="t" style="left:461px;top:773px;font-size:12px;color:#000;transform:translateX(-100%)">Объем</div><div class="t" style="left:547px;top:773px;font-size:12px;color:#000;transform:translateX(-100%)">Символ</div><div class="t" style="left:643px;top:773px;font-size:12px;color:#000;transform:translateX(-100%)">Цена</div><div class="t" style="left:739px;top:773px;font-size:12px;color:#000;transform:translateX(-100%)">S / L</div><div class="t" style="left:835px;top:773px;font-size:12px;color:#000;transform:translateX(-100%)">T / P</div><div class="t" style="left:931px;top:773px;font-size:12px;color:#000;transform:translateX(-100%)">Цена</div><div class="t" style="left:1027px;top:773px;font-size:12px;color:#000;transform:translateX(-100%)">Комиссия</div><div class="t" style="left:1123px;top:773px;font-size:12px;color:#000;transform:translateX(-100%)">Своп</div><div class="t" style="left:1270px;top:773px;font-size:12px;color:#000;transform:translateX(-100%)">Прибыль</div><div class="a" style="left:16px;top:791px;width:1259px;height:20px;background:#c8c8c8"></div><svg class="a" style="left:21px;top:796px" width="12" height="12"><circle cx="5.5" cy="5.5" r="3.8" fill="#c8c8c8" stroke="#8a8a8a" stroke-width="1.3"/><circle cx="5" cy="5" r="1.8" fill="#e0e0e0"/></svg><div class="t" style="left:37px;top:795px;font-size:12px;font-weight:bold;color:#000;letter-spacing:-0.25px">Баланс: 1 008.00 USD&nbsp; Средства: 1 008.00&nbsp; Свободная маржа: 1 008.00</div><div class="t" style="left:1271px;top:795px;font-size:12px;font-weight:bold;color:#000;transform:translateX(-100%)">0.00</div><div class="a" style="left:18px;top:934px;width:1257px;height:1px;background:#000"></div><div class="a" style="left:15px;top:935px;width:1260px;height:23px;background:#f0f0f0"></div><div class="a" style="left:15px;top:934px;width:1px;height:22px;background:#a0a0a0"></div><div class="a" style="left:18px;top:934px;width:73px;height:20px;background:#fff;border:1px solid #000;border-top:none"></div><div class="t" style="left:28px;top:938px;font-size:12px;color:#000">Торговля</div><div class="t" style="left:100px;top:938px;font-size:12px;color:#6d6d6d">Активы</div><div class="t" style="left:161px;top:938px;font-size:12px;color:#6d6d6d">История Счета</div><div class="t" style="left:263px;top:938px;font-size:12px;color:#6d6d6d">Новости</div><div class="t" style="left:330px;top:938px;font-size:12px;color:#6d6d6d">Алерты</div><div class="t" style="left:392px;top:938px;font-size:12px;color:#6d6d6d">Почта</div><div class="t" style="left:458px;top:938px;font-size:12px;color:#6d6d6d">Маркет</div><div class="t" style="left:519px;top:938px;font-size:12px;color:#6d6d6d">Сигналы</div><div class="t" style="left:588px;top:938px;font-size:12px;color:#6d6d6d">Библиотека</div><div class="t" style="left:673px;top:938px;font-size:12px;color:#6d6d6d">Эксперты</div><div class="t" style="left:747px;top:938px;font-size:12px;color:#6d6d6d">Журнал</div><div class="t" style="left:428px;top:944px;font-size:9px;color:#e02020">13</div><div class="a" style="left:151px;top:937px;width:1px;height:14px;background:#8a8a8a"></div><div class="a" style="left:253px;top:937px;width:1px;height:14px;background:#8a8a8a"></div><div class="a" style="left:320px;top:937px;width:1px;height:14px;background:#8a8a8a"></div><div class="a" style="left:382px;top:937px;width:1px;height:14px;background:#8a8a8a"></div><div class="a" style="left:449px;top:937px;width:1px;height:14px;background:#8a8a8a"></div><div class="a" style="left:509px;top:937px;width:1px;height:14px;background:#8a8a8a"></div><div class="a" style="left:578px;top:937px;width:1px;height:14px;background:#8a8a8a"></div><div class="a" style="left:663px;top:937px;width:1px;height:14px;background:#8a8a8a"></div><div class="a" style="left:737px;top:937px;width:1px;height:14px;background:#8a8a8a"></div><div class="a" style="left:801px;top:937px;width:1px;height:14px;background:#8a8a8a"></div><div class="a" style="left:0;top:959px;width:1275px;height:1px;background:#a0a0a0"></div><div class="a" style="left:0;top:960px;width:1275px;height:20px;background:#f0f0f0"></div><div class="t" style="left:3px;top:967px;font-size:12px;color:#000;transform:scaleX(0.95);transform-origin:0 0">Для вызова справки нажмите F1</div><div class="t" style="left:592px;top:967px;font-size:12px;color:#000">Default</div><div class="a" style="left:586px;top:963px;width:1px;height:17px;background:#a0a0a0"></div><div class="a" style="left:703px;top:963px;width:1px;height:17px;background:#a0a0a0"></div><div class="a" style="left:805px;top:963px;width:1px;height:17px;background:#a0a0a0"></div><div class="a" style="left:875px;top:963px;width:1px;height:17px;background:#a0a0a0"></div><div class="a" style="left:946px;top:963px;width:1px;height:17px;background:#a0a0a0"></div><div class="a" style="left:1015px;top:963px;width:1px;height:17px;background:#a0a0a0"></div><div class="a" style="left:1085px;top:963px;width:1px;height:17px;background:#a0a0a0"></div><div class="a" style="left:1151px;top:963px;width:1px;height:17px;background:#a0a0a0"></div><svg class="a" style="left:1156px;top:966px" width="24" height="14"><rect x="0" y="10.0" width="2" height="3.0" fill="#a01010"/><rect x="0" y="0" width="2" height="9.0" fill="#5a8010"/><rect x="3" y="8.6" width="2" height="4.4" fill="#a01010"/><rect x="3" y="0" width="2" height="7.6" fill="#5a8010"/><rect x="6" y="7.2" width="2" height="5.8" fill="#a01010"/><rect x="6" y="0" width="2" height="6.2" fill="#5a8010"/><rect x="9" y="5.8" width="2" height="7.2" fill="#a01010"/><rect x="9" y="0" width="2" height="4.8" fill="#5a8010"/><rect x="12" y="4.4" width="2" height="8.6" fill="#a01010"/><rect x="12" y="0" width="2" height="3.4" fill="#5a8010"/><rect x="15" y="3.0" width="2" height="10.0" fill="#a01010"/><rect x="15" y="0" width="2" height="2.0" fill="#5a8010"/><rect x="18" y="1.6" width="2" height="11.4" fill="#a01010"/><rect x="18" y="0" width="2" height="0.6" fill="#5a8010"/><rect x="21" y="0.2" width="2" height="12.8" fill="#a01010"/><rect x="21" y="0" width="2" height="-0.8" fill="#5a8010"/></svg><div class="t" style="left:1183px;top:967px;font-size:12px;color:#000;transform:scaleX(0.95);transform-origin:0 0">26632/6 kb</div></body></html>
